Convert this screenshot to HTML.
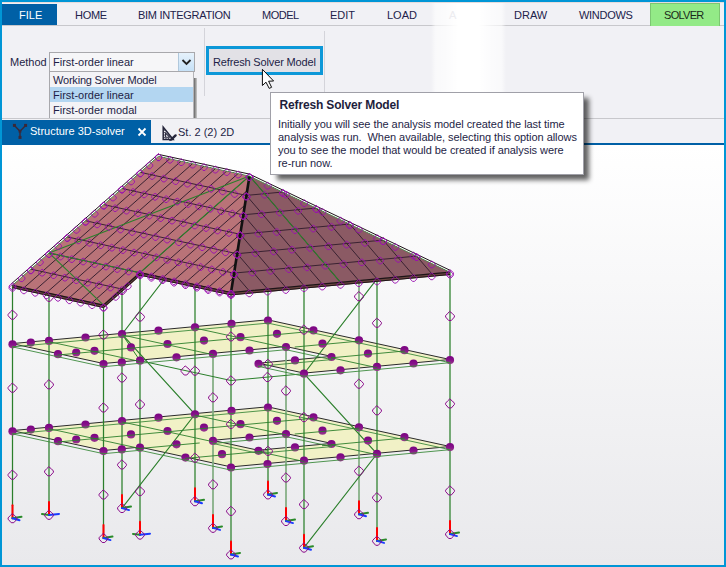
<!DOCTYPE html>
<html><head><meta charset="utf-8">
<style>
*{margin:0;padding:0;box-sizing:border-box}
html,body{width:726px;height:567px;overflow:hidden;background:#0096d6}
body{position:relative;font-family:"Liberation Sans",sans-serif;font-size:11px;color:#1e1e46}
.abs{position:absolute}
#win{position:absolute;left:2px;top:2px;width:722px;height:563px;background:#f1f1f5;overflow:hidden}
.tabtxt{position:absolute;top:7px;font-size:11px;line-height:12px;white-space:nowrap;color:#22224a}
.t{position:absolute;white-space:nowrap;line-height:12px}
</style></head><body>
<div id="win">
  <!-- top thin line -->
  <div class="abs" style="left:0;top:0;width:722px;height:1px;background:#e6dcdc"></div>
  <!-- ribbon tab row -->
  <div class="abs" style="left:0;top:2px;width:55px;height:22px;background:#0060a6"></div>
  <div class="abs" style="left:0;top:23px;width:722px;height:1px;background:#c8c8cc"></div>
  <div class="abs" style="left:648px;top:1px;width:70px;height:23px;background:#93ea87;border:1px solid #7cc672;border-bottom:none"></div>
  <div class="abs" style="left:429px;top:1px;width:75px;height:115px;background:linear-gradient(90deg,rgba(255,255,255,0) 0%,rgba(255,255,255,.6) 6%,rgba(255,255,255,.75) 20%,#fff 36%,#fff 64%,rgba(255,255,255,.75) 80%,rgba(255,255,255,.6) 94%,rgba(255,255,255,0) 100%)"></div>
  <div class="tabtxt" style="left:17px;color:#fff">FILE</div>
  <div class="tabtxt" style="left:73px;letter-spacing:-0.3px">HOME</div>
  <div class="tabtxt" style="left:136px;letter-spacing:-0.3px">BIM INTEGRATION</div>
  <div class="tabtxt" style="left:260px;letter-spacing:-0.5px">MODEL</div>
  <div class="tabtxt" style="left:328px">EDIT</div>
  <div class="tabtxt" style="left:385px">LOAD</div>
  <div class="tabtxt" style="left:447px;color:#ececf0">A</div>
  <div class="tabtxt" style="left:512px">DRAW</div>
  <div class="tabtxt" style="left:577px;letter-spacing:-0.3px">WINDOWS</div>
  <div class="tabtxt" style="left:662px;color:#1a2a1a;letter-spacing:-0.7px">SOLVER</div>

  <!-- ribbon separators -->
  <div class="abs" style="left:202px;top:26px;width:1px;height:68px;background:#d4d4da"></div>
  <div class="abs" style="left:322px;top:29px;width:1px;height:62px;background:#d4d4da"></div>
  <!-- ribbon bottom line -->
  <div class="abs" style="left:0;top:116px;width:722px;height:1px;background:#c8c8cc"></div>

  <!-- Method combo -->
  <div class="t" style="left:8px;top:54px">Method</div>
  <div class="abs" style="left:47px;top:50px;width:146px;height:20px;background:#f6f6f8;border:1px solid #a8a8ac"></div>
  <div class="abs" style="left:176px;top:51px;width:16px;height:18px;background:linear-gradient(#e6f2fc,#c6e1f7);border-left:1px solid #b0c8dc"></div>
  <svg class="abs" style="left:179px;top:55px" width="11" height="10"><path d="M1.5 3 L5.5 7 L9.5 3" fill="none" stroke="#222" stroke-width="1.8"/></svg>
  <div class="t" style="left:51px;top:54px">First-order linear</div>
  <!-- dropdown list -->
  <div class="abs" style="left:192px;top:76px;width:3px;height:40px;background:linear-gradient(90deg,#666,#ccc)"></div>
  <div class="abs" style="left:47px;top:70px;width:145px;height:46px;background:#f3f3f6;border-left:1px solid #a8a8ac;border-right:1px solid #b4b4b8"></div>
  <div class="abs" style="left:48px;top:85px;width:143px;height:15px;background:#b3d6f1"></div>
  <div class="t" style="left:51px;top:72px;letter-spacing:-0.2px">Working Solver Model</div>
  <div class="t" style="left:51px;top:87px">First-order linear</div>
  <div class="t" style="left:51px;top:102px">First-order modal</div>

  <!-- refresh button -->
  <div class="abs" style="left:204px;top:44px;width:117px;height:29px;border:3px solid #0d98d8;background:#e2e1e6"></div>
  <div class="t" style="left:211px;top:54px;letter-spacing:-0.15px">Refresh Solver Model</div>

  <!-- doc tab bar -->
  <div class="abs" style="left:0;top:117px;width:722px;height:26px;background:#f1f1f5"></div>
  <div class="abs" style="left:0;top:118px;width:149px;height:25px;background:#0060a6"></div>
  <div class="abs" style="left:0;top:141px;width:722px;height:2px;background:#0060a6"></div>
  <div class="t" style="left:28px;top:123px;color:#fff">Structure 3D-solver</div>
  <svg class="abs" style="left:135px;top:125px" width="10" height="10"><path d="M1.5 1.5 L8.5 8.5 M8.5 1.5 L1.5 8.5" stroke="#fff" stroke-width="1.8"/></svg>
  <svg class="abs" style="left:10px;top:121px" width="20" height="20"><path d="M2.4 2.4 L8 8.2 L13.6 2.4 M8 8.2 L8 14.4" stroke="#3a2838" stroke-width="1.4" fill="none"/><rect x="0.9" y="0.9" width="3" height="3" fill="#3a2838"/><rect x="12.1" y="0.9" width="3" height="3" fill="#3a2838"/><rect x="6.5" y="12.9" width="3" height="3" fill="#3a2838"/><rect x="6.6" y="6.8" width="2.8" height="2.8" fill="#3a2838"/></svg>
  <svg class="abs" style="left:158.5px;top:122.5px" width="22" height="22"><path d="M2.2 2.2 L2.2 14.6 L12.2 14.6 Z" fill="none" stroke="#25253a" stroke-width="1.5" stroke-linejoin="miter"/><path d="M4.6 8 L4.6 12.2 L8.8 12.2 Z" fill="none" stroke="#25253a" stroke-width="1.1"/><path d="M2.6 5.2 h1.3 M2.6 7.6 h1.3 M2.6 10 h1.3 M2.6 12.4 h1.3 M5 14.2 v-1.2 M7.4 14.2 v-1.2" stroke="#25253a" stroke-width="0.9"/><path d="M10.4 14.4 L14.6 10.4" stroke="#25253a" stroke-width="2.4" stroke-linecap="round"/><path d="M8.6 15.8 L10 14.4" stroke="#25253a" stroke-width="1.2"/></svg>
  <div class="t" style="left:176px;top:124px">St. 2 (2) 2D</div>

  <!-- viewport -->
  <div class="abs" style="left:0;top:143px;width:722px;height:420px;background:linear-gradient(#ffffff,#e9e9ec)"></div>
  <div class="abs" style="left:-2px;top:-2px;width:726px;height:567px;clip-path:inset(145px 2px 2px 2px)"><svg width="726" height="567" viewBox="0 0 726 567" style="position:absolute;left:0;top:0"><defs><linearGradient id="ng" x1="0" y1="0" x2="0" y2="1"><stop offset="0" stop-color="#7a0480"/><stop offset="0.5" stop-color="#86108a"/><stop offset="1" stop-color="#9a3a8e"/></linearGradient></defs><g stroke-linecap="round">
<path d="M12.5,430.7 L103.5,450.5 L140.0,447.1 L231.0,466.9 L450.0,446.5 L268.0,406.9 Z M213.0,440.3 L286.0,433.5 L331.5,443.4 L258.5,450.2 Z" fill="#f1f1c6" fill-rule="evenodd" stroke="#2a2a2a" stroke-width="1"/>
<path d="M12.5,343.7 L103.5,363.5 L286.0,346.5 L331.5,356.4 L258.5,363.2 L304.0,373.1 L450.0,359.5 L268.0,319.9 Z" fill="#f1f1c6" fill-rule="evenodd" stroke="#2a2a2a" stroke-width="1"/>
<line x1="12.5" y1="518.3" x2="12.5" y2="285.3" stroke="#2b7f2b" stroke-width="1.25" />
<line x1="49.0" y1="514.9" x2="49.0" y2="252.9" stroke="#2b7f2b" stroke-width="1.25" />
<line x1="122.0" y1="508.1" x2="122.0" y2="246.1" stroke="#2b7f2b" stroke-width="1.25" />
<line x1="195.0" y1="501.3" x2="195.0" y2="239.3" stroke="#2b7f2b" stroke-width="1.25" />
<line x1="268.0" y1="494.5" x2="268.0" y2="232.5" stroke="#2b7f2b" stroke-width="1.25" />
<line x1="103.5" y1="538.1" x2="103.5" y2="305.1" stroke="#2b7f2b" stroke-width="1.25" />
<line x1="140.0" y1="534.7" x2="140.0" y2="272.7" stroke="#2b7f2b" stroke-width="1.25" />
<line x1="213.0" y1="527.9" x2="213.0" y2="353.9" stroke="#80ac80" stroke-width="1.7" />
<line x1="286.0" y1="521.1" x2="286.0" y2="347.1" stroke="#80ac80" stroke-width="1.7" />
<line x1="359.0" y1="514.3" x2="359.0" y2="252.3" stroke="#80ac80" stroke-width="1.7" />
<line x1="231.0" y1="554.5" x2="231.0" y2="292.5" stroke="#2b7f2b" stroke-width="1.25" />
<line x1="304.0" y1="547.7" x2="304.0" y2="285.7" stroke="#2b7f2b" stroke-width="1.25" />
<line x1="377.0" y1="540.9" x2="377.0" y2="278.9" stroke="#2b7f2b" stroke-width="1.25" />
<line x1="450.0" y1="534.1" x2="450.0" y2="272.1" stroke="#2b7f2b" stroke-width="1.25" />
<polyline points="140.0,360.7 231.0,380.5 304.0,373.7" fill="none" stroke="#2b7f2b" stroke-width="1.0" />
<line x1="122.0" y1="334.1" x2="140.0" y2="360.7" stroke="#2b7f2b" stroke-width="1.0" />
<polyline points="122.0,508.1 195.0,414.3 122.0,334.1 195.0,239.3" fill="none" stroke="#2b7f2b" stroke-width="1.1" />
<polyline points="304.0,547.7 377.0,453.9 304.0,373.7 377.0,278.9" fill="none" stroke="#2b7f2b" stroke-width="1.1" />
<circle cx="12.5" cy="431.3" r="4.1" fill="url(#ng)"/>
<circle cx="30.8" cy="429.6" r="4.1" fill="url(#ng)"/>
<circle cx="49.0" cy="427.9" r="4.1" fill="url(#ng)"/>
<circle cx="85.5" cy="424.5" r="4.1" fill="url(#ng)"/>
<circle cx="122.0" cy="421.1" r="4.1" fill="url(#ng)"/>
<circle cx="158.5" cy="417.7" r="4.1" fill="url(#ng)"/>
<circle cx="195.0" cy="414.3" r="4.1" fill="url(#ng)"/>
<circle cx="231.5" cy="410.9" r="4.1" fill="url(#ng)"/>
<circle cx="268.0" cy="407.5" r="4.1" fill="url(#ng)"/>
<circle cx="58.0" cy="441.2" r="4.1" fill="url(#ng)"/>
<circle cx="76.2" cy="439.5" r="4.1" fill="url(#ng)"/>
<circle cx="94.5" cy="437.8" r="4.1" fill="url(#ng)"/>
<circle cx="131.0" cy="434.4" r="4.1" fill="url(#ng)"/>
<circle cx="167.5" cy="431.0" r="4.1" fill="url(#ng)"/>
<circle cx="204.0" cy="427.6" r="4.1" fill="url(#ng)"/>
<circle cx="240.5" cy="424.2" r="4.1" fill="url(#ng)"/>
<circle cx="277.0" cy="420.8" r="4.1" fill="url(#ng)"/>
<circle cx="313.5" cy="417.4" r="4.1" fill="url(#ng)"/>
<circle cx="103.5" cy="451.1" r="4.1" fill="url(#ng)"/>
<circle cx="121.8" cy="449.4" r="4.1" fill="url(#ng)"/>
<circle cx="140.0" cy="447.7" r="4.1" fill="url(#ng)"/>
<circle cx="176.5" cy="444.3" r="4.1" fill="url(#ng)"/>
<circle cx="213.0" cy="440.9" r="4.1" fill="url(#ng)"/>
<circle cx="249.5" cy="437.5" r="4.1" fill="url(#ng)"/>
<circle cx="286.0" cy="434.1" r="4.1" fill="url(#ng)"/>
<circle cx="322.5" cy="430.7" r="4.1" fill="url(#ng)"/>
<circle cx="359.0" cy="427.3" r="4.1" fill="url(#ng)"/>
<circle cx="185.5" cy="457.6" r="4.1" fill="url(#ng)"/>
<circle cx="222.0" cy="454.2" r="4.1" fill="url(#ng)"/>
<circle cx="258.5" cy="450.8" r="4.1" fill="url(#ng)"/>
<circle cx="295.0" cy="447.4" r="4.1" fill="url(#ng)"/>
<circle cx="331.5" cy="444.0" r="4.1" fill="url(#ng)"/>
<circle cx="368.0" cy="440.6" r="4.1" fill="url(#ng)"/>
<circle cx="404.5" cy="437.2" r="4.1" fill="url(#ng)"/>
<circle cx="231.0" cy="467.5" r="4.1" fill="url(#ng)"/>
<circle cx="267.5" cy="464.1" r="4.1" fill="url(#ng)"/>
<circle cx="304.0" cy="460.7" r="4.1" fill="url(#ng)"/>
<circle cx="340.5" cy="457.3" r="4.1" fill="url(#ng)"/>
<circle cx="377.0" cy="453.9" r="4.1" fill="url(#ng)"/>
<circle cx="413.5" cy="450.5" r="4.1" fill="url(#ng)"/>
<circle cx="450.0" cy="447.1" r="4.1" fill="url(#ng)"/>
<circle cx="12.5" cy="344.3" r="4.1" fill="url(#ng)"/>
<circle cx="30.8" cy="342.6" r="4.1" fill="url(#ng)"/>
<circle cx="49.0" cy="340.9" r="4.1" fill="url(#ng)"/>
<circle cx="85.5" cy="337.5" r="4.1" fill="url(#ng)"/>
<circle cx="122.0" cy="334.1" r="4.1" fill="url(#ng)"/>
<circle cx="158.5" cy="330.7" r="4.1" fill="url(#ng)"/>
<circle cx="195.0" cy="327.3" r="4.1" fill="url(#ng)"/>
<circle cx="231.5" cy="323.9" r="4.1" fill="url(#ng)"/>
<circle cx="268.0" cy="320.5" r="4.1" fill="url(#ng)"/>
<circle cx="58.0" cy="354.2" r="4.1" fill="url(#ng)"/>
<circle cx="76.2" cy="352.5" r="4.1" fill="url(#ng)"/>
<circle cx="94.5" cy="350.8" r="4.1" fill="url(#ng)"/>
<circle cx="131.0" cy="347.4" r="4.1" fill="url(#ng)"/>
<circle cx="167.5" cy="344.0" r="4.1" fill="url(#ng)"/>
<circle cx="204.0" cy="340.6" r="4.1" fill="url(#ng)"/>
<circle cx="240.5" cy="337.2" r="4.1" fill="url(#ng)"/>
<circle cx="277.0" cy="333.8" r="4.1" fill="url(#ng)"/>
<circle cx="313.5" cy="330.4" r="4.1" fill="url(#ng)"/>
<circle cx="103.5" cy="364.1" r="4.1" fill="url(#ng)"/>
<circle cx="121.8" cy="362.4" r="4.1" fill="url(#ng)"/>
<circle cx="140.0" cy="360.7" r="4.1" fill="url(#ng)"/>
<circle cx="176.5" cy="357.3" r="4.1" fill="url(#ng)"/>
<circle cx="213.0" cy="353.9" r="4.1" fill="url(#ng)"/>
<circle cx="249.5" cy="350.5" r="4.1" fill="url(#ng)"/>
<circle cx="286.0" cy="347.1" r="4.1" fill="url(#ng)"/>
<circle cx="322.5" cy="343.7" r="4.1" fill="url(#ng)"/>
<circle cx="359.0" cy="340.3" r="4.1" fill="url(#ng)"/>
<circle cx="258.5" cy="363.8" r="4.1" fill="url(#ng)"/>
<circle cx="295.0" cy="360.4" r="4.1" fill="url(#ng)"/>
<circle cx="331.5" cy="357.0" r="4.1" fill="url(#ng)"/>
<circle cx="368.0" cy="353.6" r="4.1" fill="url(#ng)"/>
<circle cx="404.5" cy="350.2" r="4.1" fill="url(#ng)"/>
<circle cx="304.0" cy="373.7" r="4.1" fill="url(#ng)"/>
<circle cx="340.5" cy="370.3" r="4.1" fill="url(#ng)"/>
<circle cx="377.0" cy="366.9" r="4.1" fill="url(#ng)"/>
<circle cx="413.5" cy="363.5" r="4.1" fill="url(#ng)"/>
<circle cx="450.0" cy="360.1" r="4.1" fill="url(#ng)"/>
<path d="M12.5,433.9 L103.5,453.7 M103.5,453.7 L140.0,450.3 M140.0,450.3 L231.0,470.1 M231.0,470.1 L450.0,449.7 M450.0,449.7 L268.0,410.1 M268.0,410.1 L12.5,433.9 M213.0,443.5 L286.0,436.7 M286.0,436.7 L331.5,446.6 M331.5,446.6 L258.5,453.4 M258.5,453.4 L213.0,443.5" fill="none" stroke="#3c8a3c" stroke-width="0.9"/>
<line x1="58.0" y1="442.0" x2="313.5" y2="418.2" stroke="#2b7f2b" stroke-width="0.9" />
<line x1="135.4" y1="448.9" x2="199.3" y2="443.0" stroke="#2b7f2b" stroke-width="0.9" />
<line x1="295.1" y1="434.0" x2="359.0" y2="428.1" stroke="#2b7f2b" stroke-width="0.9" />
<line x1="185.5" y1="458.4" x2="267.6" y2="450.8" stroke="#2b7f2b" stroke-width="0.9" />
<line x1="322.4" y1="445.7" x2="404.5" y2="438.0" stroke="#2b7f2b" stroke-width="0.9" />
<line x1="49.0" y1="428.7" x2="140.0" y2="448.5" stroke="#2b7f2b" stroke-width="0.9" />
<line x1="122.0" y1="421.9" x2="213.0" y2="441.7" stroke="#2b7f2b" stroke-width="0.9" />
<line x1="258.5" y1="451.6" x2="304.0" y2="461.5" stroke="#2b7f2b" stroke-width="0.9" />
<line x1="195.0" y1="415.1" x2="286.0" y2="434.9" stroke="#2b7f2b" stroke-width="0.9" />
<line x1="331.5" y1="444.8" x2="377.0" y2="454.7" stroke="#2b7f2b" stroke-width="0.9" />
<path d="M12.5,346.9 L103.5,366.7 M103.5,366.7 L286.0,349.7 M286.0,349.7 L331.5,359.6 M331.5,359.6 L258.5,366.4 M258.5,366.4 L304.0,376.3 M304.0,376.3 L450.0,362.7 M450.0,362.7 L268.0,323.1 M268.0,323.1 L12.5,346.9" fill="none" stroke="#3c8a3c" stroke-width="0.9"/>
<line x1="58.0" y1="355.0" x2="313.5" y2="331.2" stroke="#2b7f2b" stroke-width="0.9" />
<line x1="295.1" y1="347.0" x2="359.0" y2="341.1" stroke="#2b7f2b" stroke-width="0.9" />
<line x1="331.5" y1="357.8" x2="404.5" y2="351.0" stroke="#2b7f2b" stroke-width="0.9" />
<line x1="49.0" y1="341.7" x2="140.0" y2="361.5" stroke="#2b7f2b" stroke-width="0.9" />
<line x1="122.0" y1="334.9" x2="213.0" y2="354.7" stroke="#2b7f2b" stroke-width="0.9" />
<line x1="195.0" y1="328.1" x2="286.0" y2="347.9" stroke="#2b7f2b" stroke-width="0.9" />
<line x1="331.5" y1="357.8" x2="377.0" y2="367.7" stroke="#2b7f2b" stroke-width="0.9" />
<polygon points="12.5,470.4 14.9,472.2 16.9,474.4 16.9,475.7 13.8,479.2 11.2,479.2 8.1,475.7 8.1,474.4 10.1,472.2" fill="none" stroke="#8a0a8a" stroke-width="1"/>
<polygon points="12.5,383.4 14.9,385.2 16.9,387.4 16.9,388.7 13.8,392.2 11.2,392.2 8.1,388.7 8.1,387.4 10.1,385.2" fill="none" stroke="#8a0a8a" stroke-width="1"/>
<polygon points="12.5,310.4 14.9,312.2 16.9,314.4 16.9,315.7 13.8,319.2 11.2,319.2 8.1,315.7 8.1,314.4 10.1,312.2" fill="none" stroke="#8a0a8a" stroke-width="1"/>
<polygon points="49.0,467.0 51.4,468.8 53.4,471.0 53.4,472.3 50.3,475.8 47.7,475.8 44.6,472.3 44.6,471.0 46.6,468.8" fill="none" stroke="#8a0a8a" stroke-width="1"/>
<polygon points="49.0,380.0 51.4,381.8 53.4,384.0 53.4,385.3 50.3,388.8 47.7,388.8 44.6,385.3 44.6,384.0 46.6,381.8" fill="none" stroke="#8a0a8a" stroke-width="1"/>
<polygon points="49.0,292.5 51.4,294.3 53.4,296.5 53.4,297.8 50.3,301.3 47.7,301.3 44.6,297.8 44.6,296.5 46.6,294.3" fill="none" stroke="#8a0a8a" stroke-width="1"/>
<polygon points="122.0,460.2 124.4,462.0 126.4,464.2 126.4,465.5 123.3,469.0 120.7,469.0 117.6,465.5 117.6,464.2 119.6,462.0" fill="none" stroke="#8a0a8a" stroke-width="1"/>
<polygon points="122.0,373.2 124.4,375.0 126.4,377.2 126.4,378.5 123.3,382.0 120.7,382.0 117.6,378.5 117.6,377.2 119.6,375.0" fill="none" stroke="#8a0a8a" stroke-width="1"/>
<polygon points="122.0,285.7 124.4,287.5 126.4,289.7 126.4,291.0 123.3,294.5 120.7,294.5 117.6,291.0 117.6,289.7 119.6,287.5" fill="none" stroke="#8a0a8a" stroke-width="1"/>
<polygon points="195.0,453.4 197.4,455.2 199.4,457.4 199.4,458.7 196.3,462.2 193.7,462.2 190.6,458.7 190.6,457.4 192.6,455.2" fill="none" stroke="#8a0a8a" stroke-width="1"/>
<polygon points="195.0,366.4 197.4,368.2 199.4,370.4 199.4,371.7 196.3,375.2 193.7,375.2 190.6,371.7 190.6,370.4 192.6,368.2" fill="none" stroke="#8a0a8a" stroke-width="1"/>
<polygon points="195.0,278.9 197.4,280.7 199.4,282.9 199.4,284.2 196.3,287.7 193.7,287.7 190.6,284.2 190.6,282.9 192.6,280.7" fill="none" stroke="#8a0a8a" stroke-width="1"/>
<polygon points="268.0,446.6 270.4,448.4 272.4,450.6 272.4,451.9 269.3,455.4 266.7,455.4 263.6,451.9 263.6,450.6 265.6,448.4" fill="none" stroke="#8a0a8a" stroke-width="1"/>
<polygon points="268.0,359.6 270.4,361.4 272.4,363.6 272.4,364.9 269.3,368.4 266.7,368.4 263.6,364.9 263.6,363.6 265.6,361.4" fill="none" stroke="#8a0a8a" stroke-width="1"/>
<polygon points="268.0,272.1 270.4,273.9 272.4,276.1 272.4,277.4 269.3,280.9 266.7,280.9 263.6,277.4 263.6,276.1 265.6,273.9" fill="none" stroke="#8a0a8a" stroke-width="1"/>
<polygon points="103.5,490.2 105.9,492.0 107.9,494.2 107.9,495.5 104.8,499.0 102.2,499.0 99.1,495.5 99.1,494.2 101.1,492.0" fill="none" stroke="#8a0a8a" stroke-width="1"/>
<polygon points="103.5,403.2 105.9,405.0 107.9,407.2 107.9,408.5 104.8,412.0 102.2,412.0 99.1,408.5 99.1,407.2 101.1,405.0" fill="none" stroke="#8a0a8a" stroke-width="1"/>
<polygon points="103.5,330.2 105.9,332.0 107.9,334.2 107.9,335.5 104.8,339.0 102.2,339.0 99.1,335.5 99.1,334.2 101.1,332.0" fill="none" stroke="#8a0a8a" stroke-width="1"/>
<polygon points="140.0,486.8 142.4,488.6 144.4,490.8 144.4,492.1 141.3,495.6 138.7,495.6 135.6,492.1 135.6,490.8 137.6,488.6" fill="none" stroke="#8a0a8a" stroke-width="1"/>
<polygon points="140.0,399.8 142.4,401.6 144.4,403.8 144.4,405.1 141.3,408.6 138.7,408.6 135.6,405.1 135.6,403.8 137.6,401.6" fill="none" stroke="#8a0a8a" stroke-width="1"/>
<polygon points="140.0,312.3 142.4,314.1 144.4,316.3 144.4,317.6 141.3,321.1 138.7,321.1 135.6,317.6 135.6,316.3 137.6,314.1" fill="none" stroke="#8a0a8a" stroke-width="1"/>
<polygon points="213.0,480.0 215.4,481.8 217.4,484.0 217.4,485.3 214.3,488.8 211.7,488.8 208.6,485.3 208.6,484.0 210.6,481.8" fill="none" stroke="#8a0a8a" stroke-width="1"/>
<polygon points="213.0,393.0 215.4,394.8 217.4,397.0 217.4,398.3 214.3,401.8 211.7,401.8 208.6,398.3 208.6,397.0 210.6,394.8" fill="none" stroke="#8a0a8a" stroke-width="1"/>
<polygon points="286.0,473.2 288.4,475.0 290.4,477.2 290.4,478.5 287.3,482.0 284.7,482.0 281.6,478.5 281.6,477.2 283.6,475.0" fill="none" stroke="#8a0a8a" stroke-width="1"/>
<polygon points="286.0,386.2 288.4,388.0 290.4,390.2 290.4,391.5 287.3,395.0 284.7,395.0 281.6,391.5 281.6,390.2 283.6,388.0" fill="none" stroke="#8a0a8a" stroke-width="1"/>
<polygon points="359.0,466.4 361.4,468.2 363.4,470.4 363.4,471.7 360.3,475.2 357.7,475.2 354.6,471.7 354.6,470.4 356.6,468.2" fill="none" stroke="#8a0a8a" stroke-width="1"/>
<polygon points="359.0,379.4 361.4,381.2 363.4,383.4 363.4,384.7 360.3,388.2 357.7,388.2 354.6,384.7 354.6,383.4 356.6,381.2" fill="none" stroke="#8a0a8a" stroke-width="1"/>
<polygon points="359.0,291.9 361.4,293.7 363.4,295.9 363.4,297.2 360.3,300.7 357.7,300.7 354.6,297.2 354.6,295.9 356.6,293.7" fill="none" stroke="#8a0a8a" stroke-width="1"/>
<polygon points="231.0,506.6 233.4,508.4 235.4,510.6 235.4,511.9 232.3,515.4 229.7,515.4 226.6,511.9 226.6,510.6 228.6,508.4" fill="none" stroke="#8a0a8a" stroke-width="1"/>
<polygon points="231.0,419.6 233.4,421.4 235.4,423.6 235.4,424.9 232.3,428.4 229.7,428.4 226.6,424.9 226.6,423.6 228.6,421.4" fill="none" stroke="#8a0a8a" stroke-width="1"/>
<polygon points="231.0,332.1 233.4,333.9 235.4,336.1 235.4,337.4 232.3,340.9 229.7,340.9 226.6,337.4 226.6,336.1 228.6,333.9" fill="none" stroke="#8a0a8a" stroke-width="1"/>
<polygon points="304.0,499.8 306.4,501.6 308.4,503.8 308.4,505.1 305.3,508.6 302.7,508.6 299.6,505.1 299.6,503.8 301.6,501.6" fill="none" stroke="#8a0a8a" stroke-width="1"/>
<polygon points="304.0,412.8 306.4,414.6 308.4,416.8 308.4,418.1 305.3,421.6 302.7,421.6 299.6,418.1 299.6,416.8 301.6,414.6" fill="none" stroke="#8a0a8a" stroke-width="1"/>
<polygon points="304.0,325.3 306.4,327.1 308.4,329.3 308.4,330.6 305.3,334.1 302.7,334.1 299.6,330.6 299.6,329.3 301.6,327.1" fill="none" stroke="#8a0a8a" stroke-width="1"/>
<polygon points="377.0,493.0 379.4,494.8 381.4,497.0 381.4,498.3 378.3,501.8 375.7,501.8 372.6,498.3 372.6,497.0 374.6,494.8" fill="none" stroke="#8a0a8a" stroke-width="1"/>
<polygon points="377.0,406.0 379.4,407.8 381.4,410.0 381.4,411.3 378.3,414.8 375.7,414.8 372.6,411.3 372.6,410.0 374.6,407.8" fill="none" stroke="#8a0a8a" stroke-width="1"/>
<polygon points="377.0,318.5 379.4,320.3 381.4,322.5 381.4,323.8 378.3,327.3 375.7,327.3 372.6,323.8 372.6,322.5 374.6,320.3" fill="none" stroke="#8a0a8a" stroke-width="1"/>
<polygon points="450.0,486.2 452.4,488.0 454.4,490.2 454.4,491.5 451.3,495.0 448.7,495.0 445.6,491.5 445.6,490.2 447.6,488.0" fill="none" stroke="#8a0a8a" stroke-width="1"/>
<polygon points="450.0,399.2 452.4,401.0 454.4,403.2 454.4,404.5 451.3,408.0 448.7,408.0 445.6,404.5 445.6,403.2 447.6,401.0" fill="none" stroke="#8a0a8a" stroke-width="1"/>
<polygon points="450.0,311.7 452.4,313.5 454.4,315.7 454.4,317.0 451.3,320.5 448.7,320.5 445.6,317.0 445.6,315.7 447.6,313.5" fill="none" stroke="#8a0a8a" stroke-width="1"/>
<polygon points="185.5,366.2 187.9,368.0 189.9,370.2 189.9,371.5 186.8,375.0 184.2,375.0 181.1,371.5 181.1,370.2 183.1,368.0" fill="none" stroke="#8a0a8a" stroke-width="1"/>
<polygon points="231.0,376.1 233.4,377.9 235.4,380.1 235.4,381.4 232.3,384.9 229.7,384.9 226.6,381.4 226.6,380.1 228.6,377.9" fill="none" stroke="#8a0a8a" stroke-width="1"/>
<polygon points="267.5,372.7 269.9,374.5 271.9,376.7 271.9,378.0 268.8,381.5 266.2,381.5 263.1,378.0 263.1,376.7 265.1,374.5" fill="none" stroke="#8a0a8a" stroke-width="1"/>
<line x1="12.5" y1="518.3" x2="12.5" y2="505.3" stroke="#f00" stroke-width="2"/>
<line x1="12.5" y1="518.3" x2="21.5" y2="516.8" stroke="#2a8a2a" stroke-width="2"/>
<line x1="12.5" y1="518.3" x2="19.5" y2="520.3" stroke="#1a3aff" stroke-width="2"/>
<polygon points="12.5,513.9 14.9,515.7 16.9,517.9 16.9,519.2 13.8,522.7 11.2,522.7 8.1,519.2 8.1,517.9 10.1,515.7" fill="none" stroke="#8a0a8a" stroke-width="1"/>
<line x1="49.0" y1="514.9" x2="49.0" y2="501.9" stroke="#f00" stroke-width="2"/>
<line x1="49.0" y1="514.9" x2="42.0" y2="514.1" stroke="#2a8a2a" stroke-width="2"/>
<line x1="49.0" y1="514.9" x2="59.0" y2="513.9" stroke="#1a3aff" stroke-width="2"/>
<polygon points="49.0,510.5 51.4,512.3 53.4,514.5 53.4,515.8 50.3,519.3 47.7,519.3 44.6,515.8 44.6,514.5 46.6,512.3" fill="none" stroke="#8a0a8a" stroke-width="1"/>
<line x1="122.0" y1="508.1" x2="122.0" y2="495.1" stroke="#f00" stroke-width="2"/>
<line x1="122.0" y1="508.1" x2="131.0" y2="506.6" stroke="#2a8a2a" stroke-width="2"/>
<line x1="122.0" y1="508.1" x2="129.0" y2="510.1" stroke="#1a3aff" stroke-width="2"/>
<polygon points="122.0,503.7 124.4,505.5 126.4,507.7 126.4,509.0 123.3,512.5 120.7,512.5 117.6,509.0 117.6,507.7 119.6,505.5" fill="none" stroke="#8a0a8a" stroke-width="1"/>
<line x1="195.0" y1="501.3" x2="195.0" y2="488.3" stroke="#f00" stroke-width="2"/>
<line x1="195.0" y1="501.3" x2="204.0" y2="499.8" stroke="#2a8a2a" stroke-width="2"/>
<line x1="195.0" y1="501.3" x2="202.0" y2="503.3" stroke="#1a3aff" stroke-width="2"/>
<polygon points="195.0,496.9 197.4,498.7 199.4,500.9 199.4,502.2 196.3,505.7 193.7,505.7 190.6,502.2 190.6,500.9 192.6,498.7" fill="none" stroke="#8a0a8a" stroke-width="1"/>
<line x1="268.0" y1="494.5" x2="268.0" y2="481.5" stroke="#f00" stroke-width="2"/>
<line x1="268.0" y1="494.5" x2="277.0" y2="493.0" stroke="#2a8a2a" stroke-width="2"/>
<line x1="268.0" y1="494.5" x2="275.0" y2="496.5" stroke="#1a3aff" stroke-width="2"/>
<polygon points="268.0,490.1 270.4,491.9 272.4,494.1 272.4,495.4 269.3,498.9 266.7,498.9 263.6,495.4 263.6,494.1 265.6,491.9" fill="none" stroke="#8a0a8a" stroke-width="1"/>
<line x1="103.5" y1="538.1" x2="103.5" y2="525.1" stroke="#f00" stroke-width="2"/>
<line x1="103.5" y1="538.1" x2="112.5" y2="536.6" stroke="#2a8a2a" stroke-width="2"/>
<line x1="103.5" y1="538.1" x2="110.5" y2="540.1" stroke="#1a3aff" stroke-width="2"/>
<polygon points="103.5,533.7 105.9,535.5 107.9,537.7 107.9,539.0 104.8,542.5 102.2,542.5 99.1,539.0 99.1,537.7 101.1,535.5" fill="none" stroke="#8a0a8a" stroke-width="1"/>
<line x1="140.0" y1="534.7" x2="140.0" y2="521.7" stroke="#f00" stroke-width="2"/>
<line x1="140.0" y1="534.7" x2="133.0" y2="533.9" stroke="#2a8a2a" stroke-width="2"/>
<line x1="140.0" y1="534.7" x2="150.0" y2="533.7" stroke="#1a3aff" stroke-width="2"/>
<polygon points="140.0,530.3 142.4,532.1 144.4,534.3 144.4,535.6 141.3,539.1 138.7,539.1 135.6,535.6 135.6,534.3 137.6,532.1" fill="none" stroke="#8a0a8a" stroke-width="1"/>
<line x1="213.0" y1="527.9" x2="213.0" y2="514.9" stroke="#f00" stroke-width="2"/>
<line x1="213.0" y1="527.9" x2="222.0" y2="526.4" stroke="#2a8a2a" stroke-width="2"/>
<line x1="213.0" y1="527.9" x2="220.0" y2="529.9" stroke="#1a3aff" stroke-width="2"/>
<polygon points="213.0,523.5 215.4,525.3 217.4,527.5 217.4,528.8 214.3,532.3 211.7,532.3 208.6,528.8 208.6,527.5 210.6,525.3" fill="none" stroke="#8a0a8a" stroke-width="1"/>
<line x1="286.0" y1="521.1" x2="286.0" y2="508.1" stroke="#f00" stroke-width="2"/>
<line x1="286.0" y1="521.1" x2="295.0" y2="519.6" stroke="#2a8a2a" stroke-width="2"/>
<line x1="286.0" y1="521.1" x2="293.0" y2="523.1" stroke="#1a3aff" stroke-width="2"/>
<polygon points="286.0,516.7 288.4,518.5 290.4,520.7 290.4,522.0 287.3,525.5 284.7,525.5 281.6,522.0 281.6,520.7 283.6,518.5" fill="none" stroke="#8a0a8a" stroke-width="1"/>
<line x1="359.0" y1="514.3" x2="359.0" y2="501.3" stroke="#f00" stroke-width="2"/>
<line x1="359.0" y1="514.3" x2="368.0" y2="512.8" stroke="#2a8a2a" stroke-width="2"/>
<line x1="359.0" y1="514.3" x2="366.0" y2="516.3" stroke="#1a3aff" stroke-width="2"/>
<polygon points="359.0,509.9 361.4,511.7 363.4,513.9 363.4,515.2 360.3,518.7 357.7,518.7 354.6,515.2 354.6,513.9 356.6,511.7" fill="none" stroke="#8a0a8a" stroke-width="1"/>
<line x1="231.0" y1="554.5" x2="231.0" y2="541.5" stroke="#f00" stroke-width="2"/>
<line x1="231.0" y1="554.5" x2="240.0" y2="553.0" stroke="#2a8a2a" stroke-width="2"/>
<line x1="231.0" y1="554.5" x2="238.0" y2="556.5" stroke="#1a3aff" stroke-width="2"/>
<polygon points="231.0,550.1 233.4,551.9 235.4,554.1 235.4,555.4 232.3,558.9 229.7,558.9 226.6,555.4 226.6,554.1 228.6,551.9" fill="none" stroke="#8a0a8a" stroke-width="1"/>
<line x1="304.0" y1="547.7" x2="304.0" y2="534.7" stroke="#f00" stroke-width="2"/>
<line x1="304.0" y1="547.7" x2="313.0" y2="546.2" stroke="#2a8a2a" stroke-width="2"/>
<line x1="304.0" y1="547.7" x2="311.0" y2="549.7" stroke="#1a3aff" stroke-width="2"/>
<polygon points="304.0,543.3 306.4,545.1 308.4,547.3 308.4,548.6 305.3,552.1 302.7,552.1 299.6,548.6 299.6,547.3 301.6,545.1" fill="none" stroke="#8a0a8a" stroke-width="1"/>
<line x1="377.0" y1="540.9" x2="377.0" y2="527.9" stroke="#f00" stroke-width="2"/>
<line x1="377.0" y1="540.9" x2="386.0" y2="539.4" stroke="#2a8a2a" stroke-width="2"/>
<line x1="377.0" y1="540.9" x2="384.0" y2="542.9" stroke="#1a3aff" stroke-width="2"/>
<polygon points="377.0,536.5 379.4,538.3 381.4,540.5 381.4,541.8 378.3,545.3 375.7,545.3 372.6,541.8 372.6,540.5 374.6,538.3" fill="none" stroke="#8a0a8a" stroke-width="1"/>
<line x1="450.0" y1="534.1" x2="450.0" y2="521.1" stroke="#f00" stroke-width="2"/>
<line x1="450.0" y1="534.1" x2="459.0" y2="532.6" stroke="#2a8a2a" stroke-width="2"/>
<line x1="450.0" y1="534.1" x2="457.0" y2="536.1" stroke="#1a3aff" stroke-width="2"/>
<polygon points="450.0,529.7 452.4,531.5 454.4,533.7 454.4,535.0 451.3,538.5 448.7,538.5 445.6,535.0 445.6,533.7 447.6,531.5" fill="none" stroke="#8a0a8a" stroke-width="1"/>
</g>
<g stroke-linejoin="round">
<polygon points="12.5,285.3 103.5,305.1 140.0,272.7 231.0,292.5 249.5,176.0 158.5,156.2" fill="#b97378" stroke="none" stroke-width="1" />
<polygon points="231.0,292.5 450.0,272.1 249.5,176.0" fill="#8b5a64" stroke="none" stroke-width="1" />
<line x1="23.9" y1="287.8" x2="169.9" y2="158.7" stroke="#3a2232" stroke-width="1.0" />
<line x1="35.2" y1="290.2" x2="181.2" y2="161.1" stroke="#3a2232" stroke-width="1.0" />
<line x1="46.6" y1="292.7" x2="192.6" y2="163.6" stroke="#3a2232" stroke-width="1.0" />
<line x1="58.0" y1="295.2" x2="204.0" y2="166.1" stroke="#3a2232" stroke-width="1.0" />
<line x1="69.4" y1="297.7" x2="215.4" y2="168.6" stroke="#3a2232" stroke-width="1.0" />
<line x1="80.8" y1="300.1" x2="226.8" y2="171.0" stroke="#3a2232" stroke-width="1.0" />
<line x1="92.1" y1="302.6" x2="238.1" y2="173.5" stroke="#3a2232" stroke-width="1.0" />
<line x1="103.5" y1="305.1" x2="140.0" y2="272.8" stroke="#3a2232" stroke-width="1.0" />
<line x1="140.0" y1="272.8" x2="249.5" y2="176.0" stroke="#3a2232" stroke-width="1.0" />
<line x1="151.4" y1="275.3" x2="247.2" y2="190.6" stroke="#3a2232" stroke-width="1.0" />
<line x1="162.8" y1="277.8" x2="244.9" y2="205.2" stroke="#3a2232" stroke-width="1.0" />
<line x1="174.1" y1="280.2" x2="242.6" y2="219.7" stroke="#3a2232" stroke-width="1.0" />
<line x1="185.5" y1="282.7" x2="240.2" y2="234.3" stroke="#3a2232" stroke-width="1.0" />
<line x1="196.9" y1="285.2" x2="237.9" y2="248.9" stroke="#3a2232" stroke-width="1.0" />
<line x1="208.2" y1="287.7" x2="235.6" y2="263.5" stroke="#3a2232" stroke-width="1.0" />
<line x1="219.6" y1="290.1" x2="233.3" y2="278.0" stroke="#3a2232" stroke-width="1.0" />
<polyline points="30.8,269.2 42.1,271.6 53.5,274.1 64.9,276.6 76.2,279.1 87.6,281.5 99.0,284.0 110.4,286.5 121.8,289.0" fill="none" stroke="#3a2232" stroke-width="1.0" />
<polyline points="140.0,272.8 151.4,275.3 162.8,277.8 174.1,280.2 185.5,282.7 196.9,285.2 208.2,287.7 219.6,290.1 231.0,292.6" fill="none" stroke="#3a2232" stroke-width="1.0" />
<polyline points="49.0,253.0 60.4,255.5 71.8,258.0 83.1,260.4 94.5,262.9 105.9,265.4 117.2,267.9 128.6,270.4 140.0,272.8" fill="none" stroke="#3a2232" stroke-width="1.0" />
<polyline points="67.2,236.9 78.4,239.3 89.5,241.7 100.6,244.1 111.7,246.6 122.9,249.0 134.0,251.4 145.1,253.8 156.2,256.2 167.4,258.7 178.5,261.1 189.6,263.5 200.7,265.9 211.8,268.3 223.0,270.8 234.1,273.2" fill="none" stroke="#3a2232" stroke-width="1.0" />
<polyline points="85.5,220.7 97.2,223.3 108.8,225.8 120.5,228.4 132.2,230.9 143.8,233.4 155.5,236.0 167.2,238.5 178.8,241.1 190.5,243.6 202.2,246.1 213.8,248.7 225.5,251.2 237.2,253.8" fill="none" stroke="#3a2232" stroke-width="1.0" />
<polyline points="103.8,204.6 115.1,207.1 126.5,209.6 137.9,212.0 149.2,214.5 160.6,217.0 172.0,219.5 183.4,221.9 194.8,224.4 206.1,226.9 217.5,229.4 228.9,231.8 240.2,234.3" fill="none" stroke="#3a2232" stroke-width="1.0" />
<polyline points="122.0,188.5 133.0,190.9 144.1,193.3 155.1,195.7 166.1,198.1 177.2,200.5 188.2,202.9 199.2,205.3 210.2,207.7 221.3,210.1 232.3,212.5 243.3,214.9" fill="none" stroke="#3a2232" stroke-width="1.0" />
<polyline points="140.2,172.3 152.0,174.9 163.8,177.5 175.6,180.0 187.4,182.6 199.2,185.2 211.0,187.7 222.8,190.3 234.6,192.9 246.4,195.4" fill="none" stroke="#3a2232" stroke-width="1.0" />
<line x1="249.2" y1="290.8" x2="234.1" y2="273.1" stroke="#3a2232" stroke-width="1" />
<line x1="267.5" y1="289.1" x2="237.2" y2="253.7" stroke="#3a2232" stroke-width="1" />
<line x1="285.8" y1="287.4" x2="240.2" y2="234.2" stroke="#3a2232" stroke-width="1" />
<line x1="304.0" y1="285.7" x2="243.3" y2="214.8" stroke="#3a2232" stroke-width="1" />
<line x1="322.2" y1="284.0" x2="246.4" y2="195.4" stroke="#3a2232" stroke-width="1" />
<line x1="340.5" y1="282.3" x2="249.5" y2="176.0" stroke="#3a2232" stroke-width="1" />
<line x1="358.8" y1="280.6" x2="282.9" y2="192.0" stroke="#3a2232" stroke-width="1" />
<line x1="377.0" y1="278.9" x2="316.3" y2="208.0" stroke="#3a2232" stroke-width="1" />
<line x1="395.2" y1="277.2" x2="349.8" y2="224.0" stroke="#3a2232" stroke-width="1" />
<line x1="413.5" y1="275.5" x2="383.2" y2="240.1" stroke="#3a2232" stroke-width="1" />
<line x1="431.8" y1="273.8" x2="416.6" y2="256.1" stroke="#3a2232" stroke-width="1" />
<polyline points="234.1,273.1 416.6,256.1" fill="none" stroke="#3a2232" stroke-width="1.0" />
<polyline points="237.2,253.7 383.2,240.1" fill="none" stroke="#3a2232" stroke-width="1.0" />
<polyline points="240.2,234.2 349.8,224.0" fill="none" stroke="#3a2232" stroke-width="1.0" />
<polyline points="243.3,214.8 316.3,208.0" fill="none" stroke="#3a2232" stroke-width="1.0" />
<polyline points="246.4,195.4 282.9,192.0" fill="none" stroke="#3a2232" stroke-width="1.0" />
<line x1="49.0" y1="252.9" x2="249.5" y2="176.0" stroke="#2b7f2b" stroke-width="1.1" />
<line x1="49.0" y1="252.9" x2="103.5" y2="305.1" stroke="#2b7f2b" stroke-width="1.1" />
<line x1="49.0" y1="252.9" x2="140.0" y2="272.7" stroke="#2b7f2b" stroke-width="1.1" />
<line x1="140.0" y1="272.7" x2="249.5" y2="176.0" stroke="#2b7f2b" stroke-width="1.1" />
<line x1="249.5" y1="176.0" x2="340.5" y2="282.3" stroke="#2b7f2b" stroke-width="1.1" />
<polyline points="12.5,286.5 103.5,306.3 140.0,273.9 231.0,293.7 450.0,273.3" fill="none" stroke="#6a4640" stroke-width="3.2" />
<polyline points="12.5,285.3 103.5,305.1 140.0,272.7 231.0,292.5 450.0,272.1" fill="none" stroke="#1e1418" stroke-width="1.2" />
<polyline points="12.5,287.7 103.5,307.5 140.0,275.1 231.0,294.9 450.0,274.5" fill="none" stroke="#1e1418" stroke-width="1.0" />
<line x1="249.5" y1="176.0" x2="231.0" y2="292.5" stroke="#111" stroke-width="2.6" />
<polyline points="12.5,285.3 158.5,156.2 249.5,176.0 450.0,272.1" fill="none" stroke="#4a8a4a" stroke-width="1.0" />
<polyline points="11.9,284.6 158.3,155.2 249.5,175.0 450.3,271.3" fill="none" stroke="#ffffff" stroke-width="0.9" />
<polyline points="11.3,283.9 158.1,154.3 249.5,174.1 450.5,270.5" fill="none" stroke="#1e1418" stroke-width="1.0" />
<polygon points="30.8,266.8 32.6,268.1 34.1,269.8 34.1,271.0 31.8,273.6 29.7,273.6 27.4,271.0 27.4,269.8 28.9,268.1" fill="none" stroke="#9a10b0" stroke-width="0.9"/>
<polygon points="42.1,269.2 44.0,270.6 45.5,272.3 45.5,273.5 43.1,276.0 41.1,276.0 38.7,273.5 38.7,272.3 40.3,270.6" fill="none" stroke="#9a10b0" stroke-width="0.9"/>
<polygon points="53.5,271.7 55.4,273.1 56.9,274.8 56.9,276.0 54.5,278.5 52.5,278.5 50.1,276.0 50.1,274.8 51.6,273.1" fill="none" stroke="#9a10b0" stroke-width="0.9"/>
<polygon points="64.9,274.2 66.7,275.5 68.3,277.2 68.3,278.4 65.9,281.0 63.9,281.0 61.5,278.4 61.5,277.2 63.0,275.5" fill="none" stroke="#9a10b0" stroke-width="0.9"/>
<polygon points="76.2,276.7 78.1,278.0 79.7,279.7 79.7,280.9 77.3,283.5 75.2,283.5 72.8,280.9 72.8,279.7 74.4,278.0" fill="none" stroke="#9a10b0" stroke-width="0.9"/>
<polygon points="87.6,279.1 89.5,280.5 91.0,282.2 91.0,283.4 88.6,285.9 86.6,285.9 84.2,283.4 84.2,282.2 85.8,280.5" fill="none" stroke="#9a10b0" stroke-width="0.9"/>
<polygon points="99.0,281.6 100.9,283.0 102.4,284.7 102.4,285.9 100.0,288.4 98.0,288.4 95.6,285.9 95.6,284.7 97.1,283.0" fill="none" stroke="#9a10b0" stroke-width="0.9"/>
<polygon points="110.4,284.1 112.2,285.4 113.8,287.1 113.8,288.3 111.4,290.9 109.4,290.9 107.0,288.3 107.0,287.1 108.5,285.4" fill="none" stroke="#9a10b0" stroke-width="0.9"/>
<polygon points="121.8,286.6 123.6,287.9 125.2,289.6 125.2,290.8 122.8,293.4 120.7,293.4 118.3,290.8 118.3,289.6 119.9,287.9" fill="none" stroke="#9a10b0" stroke-width="0.9"/>
<polygon points="140.0,270.4 141.9,271.8 143.4,273.5 143.4,274.7 141.0,277.2 139.0,277.2 136.6,274.7 136.6,273.5 138.1,271.8" fill="none" stroke="#9a10b0" stroke-width="0.9"/>
<polygon points="151.4,272.9 153.2,274.3 154.8,276.0 154.8,277.1 152.4,279.7 150.4,279.7 148.0,277.1 148.0,276.0 149.5,274.3" fill="none" stroke="#9a10b0" stroke-width="0.9"/>
<polygon points="162.8,275.4 164.6,276.7 166.2,278.4 166.2,279.6 163.8,282.2 161.7,282.2 159.3,279.6 159.3,278.4 160.9,276.7" fill="none" stroke="#9a10b0" stroke-width="0.9"/>
<polygon points="174.1,277.9 176.0,279.2 177.5,280.9 177.5,282.1 175.1,284.6 173.1,284.6 170.7,282.1 170.7,280.9 172.3,279.2" fill="none" stroke="#9a10b0" stroke-width="0.9"/>
<polygon points="185.5,280.3 187.4,281.7 188.9,283.4 188.9,284.6 186.5,287.1 184.5,287.1 182.1,284.6 182.1,283.4 183.6,281.7" fill="none" stroke="#9a10b0" stroke-width="0.9"/>
<polygon points="196.9,282.8 198.7,284.2 200.3,285.9 200.3,287.0 197.9,289.6 195.9,289.6 193.5,287.0 193.5,285.9 195.0,284.2" fill="none" stroke="#9a10b0" stroke-width="0.9"/>
<polygon points="208.2,285.3 210.1,286.6 211.7,288.3 211.7,289.5 209.3,292.1 207.2,292.1 204.8,289.5 204.8,288.3 206.4,286.6" fill="none" stroke="#9a10b0" stroke-width="0.9"/>
<polygon points="219.6,287.8 221.5,289.1 223.0,290.8 223.0,292.0 220.6,294.5 218.6,294.5 216.2,292.0 216.2,290.8 217.8,289.1" fill="none" stroke="#9a10b0" stroke-width="0.9"/>
<polygon points="231.0,290.2 232.9,291.6 234.4,293.3 234.4,294.5 232.0,297.0 230.0,297.0 227.6,294.5 227.6,293.3 229.1,291.6" fill="none" stroke="#9a10b0" stroke-width="0.9"/>
<polygon points="49.0,250.6 50.9,252.0 52.4,253.7 52.4,254.9 50.0,257.4 48.0,257.4 45.6,254.9 45.6,253.7 47.1,252.0" fill="none" stroke="#9a10b0" stroke-width="0.9"/>
<polygon points="60.4,253.1 62.2,254.5 63.8,256.2 63.8,257.4 61.4,259.9 59.4,259.9 57.0,257.4 57.0,256.2 58.5,254.5" fill="none" stroke="#9a10b0" stroke-width="0.9"/>
<polygon points="71.8,255.6 73.6,256.9 75.2,258.6 75.2,259.8 72.8,262.4 70.7,262.4 68.3,259.8 68.3,258.6 69.9,256.9" fill="none" stroke="#9a10b0" stroke-width="0.9"/>
<polygon points="83.1,258.0 85.0,259.4 86.5,261.1 86.5,262.3 84.1,264.8 82.1,264.8 79.7,262.3 79.7,261.1 81.3,259.4" fill="none" stroke="#9a10b0" stroke-width="0.9"/>
<polygon points="94.5,260.5 96.4,261.9 97.9,263.6 97.9,264.8 95.5,267.3 93.5,267.3 91.1,264.8 91.1,263.6 92.6,261.9" fill="none" stroke="#9a10b0" stroke-width="0.9"/>
<polygon points="105.9,263.0 107.7,264.4 109.3,266.1 109.3,267.2 106.9,269.8 104.9,269.8 102.5,267.2 102.5,266.1 104.0,264.4" fill="none" stroke="#9a10b0" stroke-width="0.9"/>
<polygon points="117.2,265.5 119.1,266.8 120.7,268.5 120.7,269.7 118.3,272.3 116.2,272.3 113.8,269.7 113.8,268.5 115.4,266.8" fill="none" stroke="#9a10b0" stroke-width="0.9"/>
<polygon points="128.6,268.0 130.5,269.3 132.0,271.0 132.0,272.2 129.6,274.8 127.6,274.8 125.2,272.2 125.2,271.0 126.8,269.3" fill="none" stroke="#9a10b0" stroke-width="0.9"/>
<polygon points="140.0,270.4 141.9,271.8 143.4,273.5 143.4,274.7 141.0,277.2 139.0,277.2 136.6,274.7 136.6,273.5 138.1,271.8" fill="none" stroke="#9a10b0" stroke-width="0.9"/>
<polygon points="67.2,234.5 69.1,235.8 70.7,237.5 70.7,238.7 68.3,241.3 66.2,241.3 63.9,238.7 63.9,237.5 65.4,235.8" fill="none" stroke="#9a10b0" stroke-width="0.9"/>
<polygon points="78.4,236.9 80.2,238.3 81.8,240.0 81.8,241.2 79.4,243.7 77.4,243.7 75.0,241.2 75.0,240.0 76.5,238.3" fill="none" stroke="#9a10b0" stroke-width="0.9"/>
<polygon points="89.5,239.3 91.4,240.7 92.9,242.4 92.9,243.6 90.5,246.1 88.5,246.1 86.1,243.6 86.1,242.4 87.6,240.7" fill="none" stroke="#9a10b0" stroke-width="0.9"/>
<polygon points="100.6,241.7 102.5,243.1 104.0,244.8 104.0,246.0 101.6,248.5 99.6,248.5 97.2,246.0 97.2,244.8 98.7,243.1" fill="none" stroke="#9a10b0" stroke-width="0.9"/>
<polygon points="111.7,244.2 113.6,245.5 115.1,247.2 115.1,248.4 112.8,251.0 110.7,251.0 108.3,248.4 108.3,247.2 109.9,245.5" fill="none" stroke="#9a10b0" stroke-width="0.9"/>
<polygon points="122.9,246.6 124.7,247.9 126.3,249.6 126.3,250.8 123.9,253.4 121.8,253.4 119.5,250.8 119.5,249.6 121.0,247.9" fill="none" stroke="#9a10b0" stroke-width="0.9"/>
<polygon points="134.0,249.0 135.9,250.4 137.4,252.1 137.4,253.3 135.0,255.8 133.0,255.8 130.6,253.3 130.6,252.1 132.1,250.4" fill="none" stroke="#9a10b0" stroke-width="0.9"/>
<polygon points="145.1,251.4 147.0,252.8 148.5,254.5 148.5,255.7 146.1,258.2 144.1,258.2 141.7,255.7 141.7,254.5 143.2,252.8" fill="none" stroke="#9a10b0" stroke-width="0.9"/>
<polygon points="156.2,253.8 158.1,255.2 159.6,256.9 159.6,258.1 157.2,260.6 155.2,260.6 152.8,258.1 152.8,256.9 154.4,255.2" fill="none" stroke="#9a10b0" stroke-width="0.9"/>
<polygon points="167.4,256.3 169.2,257.6 170.8,259.3 170.8,260.5 168.4,263.1 166.3,263.1 164.0,260.5 164.0,259.3 165.5,257.6" fill="none" stroke="#9a10b0" stroke-width="0.9"/>
<polygon points="178.5,258.7 180.3,260.0 181.9,261.7 181.9,262.9 179.5,265.5 177.5,265.5 175.1,262.9 175.1,261.7 176.6,260.0" fill="none" stroke="#9a10b0" stroke-width="0.9"/>
<polygon points="189.6,261.1 191.5,262.5 193.0,264.2 193.0,265.4 190.6,267.9 188.6,267.9 186.2,265.4 186.2,264.2 187.7,262.5" fill="none" stroke="#9a10b0" stroke-width="0.9"/>
<polygon points="200.7,263.5 202.6,264.9 204.1,266.6 204.1,267.8 201.7,270.3 199.7,270.3 197.3,267.8 197.3,266.6 198.8,264.9" fill="none" stroke="#9a10b0" stroke-width="0.9"/>
<polygon points="211.8,265.9 213.7,267.3 215.2,269.0 215.2,270.2 212.9,272.7 210.8,272.7 208.4,270.2 208.4,269.0 210.0,267.3" fill="none" stroke="#9a10b0" stroke-width="0.9"/>
<polygon points="223.0,268.4 224.8,269.7 226.4,271.4 226.4,272.6 224.0,275.2 221.9,275.2 219.6,272.6 219.6,271.4 221.1,269.7" fill="none" stroke="#9a10b0" stroke-width="0.9"/>
<polygon points="234.1,270.8 236.0,272.1 237.5,273.8 237.5,275.0 235.1,277.6 233.1,277.6 230.7,275.0 230.7,273.8 232.2,272.1" fill="none" stroke="#9a10b0" stroke-width="0.9"/>
<polygon points="85.5,218.3 87.4,219.7 88.9,221.4 88.9,222.6 86.5,225.1 84.5,225.1 82.1,222.6 82.1,221.4 83.6,219.7" fill="none" stroke="#9a10b0" stroke-width="0.9"/>
<polygon points="97.2,220.9 99.0,222.2 100.6,223.9 100.6,225.1 98.2,227.7 96.1,227.7 93.8,225.1 93.8,223.9 95.3,222.2" fill="none" stroke="#9a10b0" stroke-width="0.9"/>
<polygon points="108.8,223.4 110.7,224.8 112.2,226.5 112.2,227.7 109.9,230.2 107.8,230.2 105.4,227.7 105.4,226.5 107.0,224.8" fill="none" stroke="#9a10b0" stroke-width="0.9"/>
<polygon points="120.5,226.0 122.4,227.3 123.9,229.0 123.9,230.2 121.5,232.8 119.5,232.8 117.1,230.2 117.1,229.0 118.6,227.3" fill="none" stroke="#9a10b0" stroke-width="0.9"/>
<polygon points="132.2,228.5 134.0,229.9 135.6,231.6 135.6,232.8 133.2,235.3 131.1,235.3 128.8,232.8 128.8,231.6 130.3,229.9" fill="none" stroke="#9a10b0" stroke-width="0.9"/>
<polygon points="143.8,231.0 145.7,232.4 147.2,234.1 147.2,235.3 144.9,237.8 142.8,237.8 140.4,235.3 140.4,234.1 142.0,232.4" fill="none" stroke="#9a10b0" stroke-width="0.9"/>
<polygon points="155.5,233.6 157.4,234.9 158.9,236.6 158.9,237.8 156.5,240.4 154.5,240.4 152.1,237.8 152.1,236.6 153.6,234.9" fill="none" stroke="#9a10b0" stroke-width="0.9"/>
<polygon points="167.2,236.1 169.0,237.5 170.6,239.2 170.6,240.4 168.2,242.9 166.1,242.9 163.8,240.4 163.8,239.2 165.3,237.5" fill="none" stroke="#9a10b0" stroke-width="0.9"/>
<polygon points="178.8,238.7 180.7,240.0 182.2,241.7 182.2,242.9 179.9,245.5 177.8,245.5 175.4,242.9 175.4,241.7 177.0,240.0" fill="none" stroke="#9a10b0" stroke-width="0.9"/>
<polygon points="190.5,241.2 192.4,242.6 193.9,244.3 193.9,245.4 191.5,248.0 189.5,248.0 187.1,245.4 187.1,244.3 188.6,242.6" fill="none" stroke="#9a10b0" stroke-width="0.9"/>
<polygon points="202.2,243.7 204.0,245.1 205.6,246.8 205.6,248.0 203.2,250.5 201.1,250.5 198.8,248.0 198.8,246.8 200.3,245.1" fill="none" stroke="#9a10b0" stroke-width="0.9"/>
<polygon points="213.8,246.3 215.7,247.6 217.2,249.3 217.2,250.5 214.9,253.1 212.8,253.1 210.4,250.5 210.4,249.3 212.0,247.6" fill="none" stroke="#9a10b0" stroke-width="0.9"/>
<polygon points="225.5,248.8 227.4,250.2 228.9,251.9 228.9,253.1 226.5,255.6 224.5,255.6 222.1,253.1 222.1,251.9 223.6,250.2" fill="none" stroke="#9a10b0" stroke-width="0.9"/>
<polygon points="237.2,251.3 239.0,252.7 240.6,254.4 240.6,255.6 238.2,258.1 236.1,258.1 233.8,255.6 233.8,254.4 235.3,252.7" fill="none" stroke="#9a10b0" stroke-width="0.9"/>
<polygon points="103.8,202.2 105.6,203.6 107.2,205.3 107.2,206.5 104.8,209.0 102.7,209.0 100.3,206.5 100.3,205.3 101.9,203.6" fill="none" stroke="#9a10b0" stroke-width="0.9"/>
<polygon points="115.1,204.7 117.0,206.0 118.5,207.7 118.5,208.9 116.1,211.5 114.1,211.5 111.7,208.9 111.7,207.7 113.3,206.0" fill="none" stroke="#9a10b0" stroke-width="0.9"/>
<polygon points="126.5,207.2 128.4,208.5 129.9,210.2 129.9,211.4 127.5,214.0 125.5,214.0 123.1,211.4 123.1,210.2 124.6,208.5" fill="none" stroke="#9a10b0" stroke-width="0.9"/>
<polygon points="137.9,209.6 139.7,211.0 141.3,212.7 141.3,213.9 138.9,216.4 136.9,216.4 134.5,213.9 134.5,212.7 136.0,211.0" fill="none" stroke="#9a10b0" stroke-width="0.9"/>
<polygon points="149.2,212.1 151.1,213.5 152.7,215.2 152.7,216.4 150.3,218.9 148.2,218.9 145.8,216.4 145.8,215.2 147.4,213.5" fill="none" stroke="#9a10b0" stroke-width="0.9"/>
<polygon points="160.6,214.6 162.5,215.9 164.0,217.6 164.0,218.8 161.6,221.4 159.6,221.4 157.2,218.8 157.2,217.6 158.8,215.9" fill="none" stroke="#9a10b0" stroke-width="0.9"/>
<polygon points="172.0,217.1 173.9,218.4 175.4,220.1 175.4,221.3 173.0,223.9 171.0,223.9 168.6,221.3 168.6,220.1 170.1,218.4" fill="none" stroke="#9a10b0" stroke-width="0.9"/>
<polygon points="183.4,219.5 185.2,220.9 186.8,222.6 186.8,223.8 184.4,226.3 182.4,226.3 180.0,223.8 180.0,222.6 181.5,220.9" fill="none" stroke="#9a10b0" stroke-width="0.9"/>
<polygon points="194.8,222.0 196.6,223.4 198.2,225.1 198.2,226.3 195.8,228.8 193.7,228.8 191.3,226.3 191.3,225.1 192.9,223.4" fill="none" stroke="#9a10b0" stroke-width="0.9"/>
<polygon points="206.1,224.5 208.0,225.8 209.5,227.5 209.5,228.7 207.1,231.3 205.1,231.3 202.7,228.7 202.7,227.5 204.3,225.8" fill="none" stroke="#9a10b0" stroke-width="0.9"/>
<polygon points="217.5,227.0 219.4,228.3 220.9,230.0 220.9,231.2 218.5,233.8 216.5,233.8 214.1,231.2 214.1,230.0 215.6,228.3" fill="none" stroke="#9a10b0" stroke-width="0.9"/>
<polygon points="228.9,229.4 230.7,230.8 232.3,232.5 232.3,233.7 229.9,236.2 227.9,236.2 225.5,233.7 225.5,232.5 227.0,230.8" fill="none" stroke="#9a10b0" stroke-width="0.9"/>
<polygon points="240.2,231.9 242.1,233.3 243.7,235.0 243.7,236.2 241.3,238.7 239.2,238.7 236.8,236.2 236.8,235.0 238.4,233.3" fill="none" stroke="#9a10b0" stroke-width="0.9"/>
<polygon points="122.0,186.1 123.9,187.4 125.4,189.1 125.4,190.3 123.0,192.9 121.0,192.9 118.6,190.3 118.6,189.1 120.1,187.4" fill="none" stroke="#9a10b0" stroke-width="0.9"/>
<polygon points="133.0,188.5 134.9,189.8 136.4,191.5 136.4,192.7 134.1,195.3 132.0,195.3 129.6,192.7 129.6,191.5 131.2,189.8" fill="none" stroke="#9a10b0" stroke-width="0.9"/>
<polygon points="144.1,190.9 145.9,192.2 147.5,193.9 147.5,195.1 145.1,197.7 143.0,197.7 140.7,195.1 140.7,193.9 142.2,192.2" fill="none" stroke="#9a10b0" stroke-width="0.9"/>
<polygon points="155.1,193.3 157.0,194.6 158.5,196.3 158.5,197.5 156.1,200.1 154.1,200.1 151.7,197.5 151.7,196.3 153.2,194.6" fill="none" stroke="#9a10b0" stroke-width="0.9"/>
<polygon points="166.1,195.7 168.0,197.0 169.5,198.7 169.5,199.9 167.1,202.5 165.1,202.5 162.7,199.9 162.7,198.7 164.3,197.0" fill="none" stroke="#9a10b0" stroke-width="0.9"/>
<polygon points="177.2,198.1 179.0,199.4 180.6,201.1 180.6,202.3 178.2,204.9 176.1,204.9 173.8,202.3 173.8,201.1 175.3,199.4" fill="none" stroke="#9a10b0" stroke-width="0.9"/>
<polygon points="188.2,200.5 190.1,201.8 191.6,203.5 191.6,204.7 189.2,207.3 187.2,207.3 184.8,204.7 184.8,203.5 186.3,201.8" fill="none" stroke="#9a10b0" stroke-width="0.9"/>
<polygon points="199.2,202.9 201.1,204.2 202.6,205.9 202.6,207.1 200.2,209.7 198.2,209.7 195.8,207.1 195.8,205.9 197.3,204.2" fill="none" stroke="#9a10b0" stroke-width="0.9"/>
<polygon points="210.2,205.3 212.1,206.6 213.6,208.3 213.6,209.5 211.3,212.1 209.2,212.1 206.8,209.5 206.8,208.3 208.4,206.6" fill="none" stroke="#9a10b0" stroke-width="0.9"/>
<polygon points="221.3,207.7 223.1,209.0 224.7,210.7 224.7,211.9 222.3,214.5 220.3,214.5 217.9,211.9 217.9,210.7 219.4,209.0" fill="none" stroke="#9a10b0" stroke-width="0.9"/>
<polygon points="232.3,210.1 234.2,211.4 235.7,213.1 235.7,214.3 233.3,216.9 231.3,216.9 228.9,214.3 228.9,213.1 230.4,211.4" fill="none" stroke="#9a10b0" stroke-width="0.9"/>
<polygon points="243.3,212.5 245.2,213.8 246.7,215.5 246.7,216.7 244.4,219.3 242.3,219.3 239.9,216.7 239.9,215.5 241.5,213.8" fill="none" stroke="#9a10b0" stroke-width="0.9"/>
<polygon points="140.2,169.9 142.1,171.3 143.7,173.0 143.7,174.2 141.3,176.7 139.2,176.7 136.8,174.2 136.8,173.0 138.4,171.3" fill="none" stroke="#9a10b0" stroke-width="0.9"/>
<polygon points="152.0,172.5 153.9,173.9 155.4,175.6 155.4,176.8 153.1,179.3 151.0,179.3 148.6,176.8 148.6,175.6 150.2,173.9" fill="none" stroke="#9a10b0" stroke-width="0.9"/>
<polygon points="163.8,175.1 165.7,176.4 167.2,178.1 167.2,179.3 164.9,181.9 162.8,181.9 160.4,179.3 160.4,178.1 162.0,176.4" fill="none" stroke="#9a10b0" stroke-width="0.9"/>
<polygon points="175.6,177.6 177.5,179.0 179.0,180.7 179.0,181.9 176.7,184.4 174.6,184.4 172.2,181.9 172.2,180.7 173.8,179.0" fill="none" stroke="#9a10b0" stroke-width="0.9"/>
<polygon points="187.4,180.2 189.3,181.6 190.8,183.3 190.8,184.5 188.5,187.0 186.4,187.0 184.0,184.5 184.0,183.3 185.6,181.6" fill="none" stroke="#9a10b0" stroke-width="0.9"/>
<polygon points="199.2,182.8 201.1,184.1 202.6,185.8 202.6,187.0 200.3,189.6 198.2,189.6 195.8,187.0 195.8,185.8 197.4,184.1" fill="none" stroke="#9a10b0" stroke-width="0.9"/>
<polygon points="211.0,185.3 212.9,186.7 214.4,188.4 214.4,189.6 212.0,192.1 210.0,192.1 207.6,189.6 207.6,188.4 209.2,186.7" fill="none" stroke="#9a10b0" stroke-width="0.9"/>
<polygon points="222.8,187.9 224.7,189.3 226.2,191.0 226.2,192.2 223.8,194.7 221.8,194.7 219.4,192.2 219.4,191.0 221.0,189.3" fill="none" stroke="#9a10b0" stroke-width="0.9"/>
<polygon points="234.6,190.5 236.5,191.8 238.0,193.5 238.0,194.7 235.6,197.3 233.6,197.3 231.2,194.7 231.2,193.5 232.8,191.8" fill="none" stroke="#9a10b0" stroke-width="0.9"/>
<polygon points="246.4,193.0 248.3,194.4 249.8,196.1 249.8,197.3 247.4,199.8 245.4,199.8 243.0,197.3 243.0,196.1 244.5,194.4" fill="none" stroke="#9a10b0" stroke-width="0.9"/>
<polygon points="252.3,269.0 254.2,270.3 255.7,272.0 255.7,273.2 253.4,275.8 251.3,275.8 248.9,273.2 248.9,272.0 250.5,270.3" fill="none" stroke="#9a10b0" stroke-width="0.9"/>
<polygon points="270.6,267.3 272.5,268.6 274.0,270.3 274.0,271.5 271.6,274.1 269.6,274.1 267.2,271.5 267.2,270.3 268.7,268.6" fill="none" stroke="#9a10b0" stroke-width="0.9"/>
<polygon points="288.8,265.6 290.7,266.9 292.2,268.6 292.2,269.8 289.9,272.4 287.8,272.4 285.4,269.8 285.4,268.6 287.0,266.9" fill="none" stroke="#9a10b0" stroke-width="0.9"/>
<polygon points="307.1,263.9 309.0,265.2 310.5,266.9 310.5,268.1 308.1,270.7 306.1,270.7 303.7,268.1 303.7,266.9 305.2,265.2" fill="none" stroke="#9a10b0" stroke-width="0.9"/>
<polygon points="325.3,262.2 327.2,263.5 328.7,265.2 328.7,266.4 326.4,269.0 324.3,269.0 321.9,266.4 321.9,265.2 323.5,263.5" fill="none" stroke="#9a10b0" stroke-width="0.9"/>
<polygon points="343.6,260.5 345.5,261.8 347.0,263.5 347.0,264.7 344.6,267.3 342.6,267.3 340.2,264.7 340.2,263.5 341.7,261.8" fill="none" stroke="#9a10b0" stroke-width="0.9"/>
<polygon points="361.8,258.8 363.7,260.1 365.2,261.8 365.2,263.0 362.9,265.6 360.8,265.6 358.4,263.0 358.4,261.8 360.0,260.1" fill="none" stroke="#9a10b0" stroke-width="0.9"/>
<polygon points="380.1,257.1 382.0,258.4 383.5,260.1 383.5,261.3 381.1,263.9 379.1,263.9 376.7,261.3 376.7,260.1 378.2,258.4" fill="none" stroke="#9a10b0" stroke-width="0.9"/>
<polygon points="398.3,255.4 400.2,256.7 401.7,258.4 401.7,259.6 399.4,262.2 397.3,262.2 394.9,259.6 394.9,258.4 396.5,256.7" fill="none" stroke="#9a10b0" stroke-width="0.9"/>
<polygon points="416.6,253.7 418.5,255.0 420.0,256.7 420.0,257.9 417.6,260.5 415.6,260.5 413.2,257.9 413.2,256.7 414.7,255.0" fill="none" stroke="#9a10b0" stroke-width="0.9"/>
<polygon points="234.1,270.7 236.0,272.0 237.5,273.7 237.5,274.9 235.1,277.5 233.1,277.5 230.7,274.9 230.7,273.7 232.2,272.0" fill="none" stroke="#9a10b0" stroke-width="0.9"/>
<polygon points="416.6,253.7 418.5,255.0 420.0,256.7 420.0,257.9 417.6,260.5 415.6,260.5 413.2,257.9 413.2,256.7 414.7,255.0" fill="none" stroke="#9a10b0" stroke-width="0.9"/>
<polygon points="255.4,249.6 257.3,250.9 258.8,252.6 258.8,253.8 256.4,256.4 254.4,256.4 252.0,253.8 252.0,252.6 253.5,250.9" fill="none" stroke="#9a10b0" stroke-width="0.9"/>
<polygon points="273.7,247.9 275.5,249.2 277.1,250.9 277.1,252.1 274.7,254.7 272.6,254.7 270.3,252.1 270.3,250.9 271.8,249.2" fill="none" stroke="#9a10b0" stroke-width="0.9"/>
<polygon points="291.9,246.2 293.8,247.5 295.3,249.2 295.3,250.4 292.9,253.0 290.9,253.0 288.5,250.4 288.5,249.2 290.0,247.5" fill="none" stroke="#9a10b0" stroke-width="0.9"/>
<polygon points="310.2,244.5 312.0,245.8 313.6,247.5 313.6,248.7 311.2,251.3 309.1,251.3 306.8,248.7 306.8,247.5 308.3,245.8" fill="none" stroke="#9a10b0" stroke-width="0.9"/>
<polygon points="328.4,242.8 330.3,244.1 331.8,245.8 331.8,247.0 329.4,249.6 327.4,249.6 325.0,247.0 325.0,245.8 326.5,244.1" fill="none" stroke="#9a10b0" stroke-width="0.9"/>
<polygon points="346.7,241.1 348.5,242.4 350.1,244.1 350.1,245.3 347.7,247.9 345.6,247.9 343.3,245.3 343.3,244.1 344.8,242.4" fill="none" stroke="#9a10b0" stroke-width="0.9"/>
<polygon points="364.9,239.4 366.8,240.7 368.3,242.4 368.3,243.6 365.9,246.2 363.9,246.2 361.5,243.6 361.5,242.4 363.0,240.7" fill="none" stroke="#9a10b0" stroke-width="0.9"/>
<polygon points="383.2,237.7 385.0,239.0 386.6,240.7 386.6,241.9 384.2,244.5 382.1,244.5 379.8,241.9 379.8,240.7 381.3,239.0" fill="none" stroke="#9a10b0" stroke-width="0.9"/>
<polygon points="237.2,251.3 239.0,252.6 240.6,254.3 240.6,255.5 238.2,258.1 236.1,258.1 233.8,255.5 233.8,254.3 235.3,252.6" fill="none" stroke="#9a10b0" stroke-width="0.9"/>
<polygon points="383.2,237.7 385.0,239.0 386.6,240.7 386.6,241.9 384.2,244.5 382.1,244.5 379.8,241.9 379.8,240.7 381.3,239.0" fill="none" stroke="#9a10b0" stroke-width="0.9"/>
<polygon points="240.2,231.8 242.1,233.2 243.7,234.9 243.7,236.1 241.3,238.7 239.2,238.7 236.8,236.1 236.8,234.9 238.4,233.2" fill="none" stroke="#9a10b0" stroke-width="0.9"/>
<polygon points="258.5,230.1 260.4,231.5 261.9,233.2 261.9,234.4 259.5,236.9 257.5,236.9 255.1,234.4 255.1,233.2 256.6,231.5" fill="none" stroke="#9a10b0" stroke-width="0.9"/>
<polygon points="276.8,228.5 278.6,229.8 280.1,231.5 280.1,232.7 277.8,235.3 275.7,235.3 273.4,232.7 273.4,231.5 274.9,229.8" fill="none" stroke="#9a10b0" stroke-width="0.9"/>
<polygon points="295.0,226.7 296.9,228.1 298.4,229.8 298.4,231.0 296.0,233.5 294.0,233.5 291.6,231.0 291.6,229.8 293.1,228.1" fill="none" stroke="#9a10b0" stroke-width="0.9"/>
<polygon points="313.2,225.1 315.1,226.4 316.6,228.1 316.6,229.3 314.3,231.9 312.2,231.9 309.9,229.3 309.9,228.1 311.4,226.4" fill="none" stroke="#9a10b0" stroke-width="0.9"/>
<polygon points="331.5,223.3 333.4,224.7 334.9,226.4 334.9,227.6 332.5,230.2 330.5,230.2 328.1,227.6 328.1,226.4 329.6,224.7" fill="none" stroke="#9a10b0" stroke-width="0.9"/>
<polygon points="349.8,221.6 351.6,223.0 353.1,224.7 353.1,225.9 350.8,228.4 348.7,228.4 346.4,225.9 346.4,224.7 347.9,223.0" fill="none" stroke="#9a10b0" stroke-width="0.9"/>
<polygon points="240.2,231.8 242.1,233.2 243.7,234.9 243.7,236.1 241.3,238.7 239.2,238.7 236.8,236.1 236.8,234.9 238.4,233.2" fill="none" stroke="#9a10b0" stroke-width="0.9"/>
<polygon points="349.8,221.6 351.6,223.0 353.1,224.7 353.1,225.9 350.8,228.4 348.7,228.4 346.4,225.9 346.4,224.7 347.9,223.0" fill="none" stroke="#9a10b0" stroke-width="0.9"/>
<polygon points="261.6,210.7 263.5,212.1 265.0,213.8 265.0,215.0 262.6,217.5 260.6,217.5 258.2,215.0 258.2,213.8 259.7,212.1" fill="none" stroke="#9a10b0" stroke-width="0.9"/>
<polygon points="279.8,209.0 281.7,210.4 283.2,212.1 283.2,213.3 280.9,215.8 278.8,215.8 276.4,213.3 276.4,212.1 278.0,210.4" fill="none" stroke="#9a10b0" stroke-width="0.9"/>
<polygon points="298.1,207.3 300.0,208.7 301.5,210.4 301.5,211.6 299.1,214.1 297.1,214.1 294.7,211.6 294.7,210.4 296.2,208.7" fill="none" stroke="#9a10b0" stroke-width="0.9"/>
<polygon points="316.3,205.6 318.2,207.0 319.7,208.7 319.7,209.9 317.4,212.4 315.3,212.4 312.9,209.9 312.9,208.7 314.5,207.0" fill="none" stroke="#9a10b0" stroke-width="0.9"/>
<polygon points="243.3,212.4 245.2,213.8 246.7,215.5 246.7,216.7 244.4,219.2 242.3,219.2 239.9,216.7 239.9,215.5 241.5,213.8" fill="none" stroke="#9a10b0" stroke-width="0.9"/>
<polygon points="316.3,205.6 318.2,207.0 319.7,208.7 319.7,209.9 317.4,212.4 315.3,212.4 312.9,209.9 312.9,208.7 314.5,207.0" fill="none" stroke="#9a10b0" stroke-width="0.9"/>
<polygon points="264.7,191.3 266.5,192.7 268.1,194.4 268.1,195.6 265.7,198.1 263.6,198.1 261.3,195.6 261.3,194.4 262.8,192.7" fill="none" stroke="#9a10b0" stroke-width="0.9"/>
<polygon points="282.9,189.6 284.8,191.0 286.3,192.7 286.3,193.9 283.9,196.4 281.9,196.4 279.5,193.9 279.5,192.7 281.0,191.0" fill="none" stroke="#9a10b0" stroke-width="0.9"/>
<polygon points="246.4,193.0 248.3,194.4 249.8,196.1 249.8,197.3 247.4,199.8 245.4,199.8 243.0,197.3 243.0,196.1 244.5,194.4" fill="none" stroke="#9a10b0" stroke-width="0.9"/>
<polygon points="282.9,189.6 284.8,191.0 286.3,192.7 286.3,193.9 283.9,196.4 281.9,196.4 279.5,193.9 279.5,192.7 281.0,191.0" fill="none" stroke="#9a10b0" stroke-width="0.9"/>
<polygon points="12.5,284.4 14.4,285.8 15.9,287.5 15.9,288.6 13.5,291.2 11.5,291.2 9.1,288.6 9.1,287.5 10.6,285.8" fill="none" stroke="#9a10b0" stroke-width="0.9"/>
<polygon points="23.9,286.9 25.7,288.2 27.3,289.9 27.3,291.1 24.9,293.7 22.9,293.7 20.5,291.1 20.5,289.9 22.0,288.2" fill="none" stroke="#9a10b0" stroke-width="0.9"/>
<polygon points="35.2,289.3 37.1,290.7 38.6,292.4 38.6,293.6 36.3,296.1 34.2,296.1 31.9,293.6 31.9,292.4 33.4,290.7" fill="none" stroke="#9a10b0" stroke-width="0.9"/>
<polygon points="46.6,291.8 48.5,293.2 50.0,294.9 50.0,296.1 47.6,298.6 45.6,298.6 43.2,296.1 43.2,294.9 44.8,293.2" fill="none" stroke="#9a10b0" stroke-width="0.9"/>
<polygon points="58.0,294.3 59.9,295.7 61.4,297.4 61.4,298.5 59.0,301.1 57.0,301.1 54.6,298.5 54.6,297.4 56.1,295.7" fill="none" stroke="#9a10b0" stroke-width="0.9"/>
<polygon points="69.4,296.8 71.2,298.1 72.8,299.8 72.8,301.0 70.4,303.6 68.4,303.6 66.0,301.0 66.0,299.8 67.5,298.1" fill="none" stroke="#9a10b0" stroke-width="0.9"/>
<polygon points="80.8,299.2 82.6,300.6 84.2,302.3 84.2,303.5 81.8,306.0 79.7,306.0 77.3,303.5 77.3,302.3 78.9,300.6" fill="none" stroke="#9a10b0" stroke-width="0.9"/>
<polygon points="92.1,301.7 94.0,303.1 95.5,304.8 95.5,306.0 93.1,308.5 91.1,308.5 88.7,306.0 88.7,304.8 90.3,303.1" fill="none" stroke="#9a10b0" stroke-width="0.9"/>
<polygon points="103.5,304.2 105.4,305.6 106.9,307.3 106.9,308.4 104.5,311.0 102.5,311.0 100.1,308.4 100.1,307.3 101.6,305.6" fill="none" stroke="#9a10b0" stroke-width="0.9"/>
<polygon points="103.5,304.2 105.4,305.6 106.9,307.3 106.9,308.4 104.5,311.0 102.5,311.0 100.1,308.4 100.1,307.3 101.6,305.6" fill="none" stroke="#9a10b0" stroke-width="0.9"/>
<polygon points="115.7,293.4 117.5,294.8 119.1,296.5 119.1,297.6 116.7,300.2 114.6,300.2 112.3,297.6 112.3,296.5 113.8,294.8" fill="none" stroke="#9a10b0" stroke-width="0.9"/>
<polygon points="127.8,282.6 129.7,284.0 131.2,285.7 131.2,286.8 128.9,289.4 126.8,289.4 124.4,286.8 124.4,285.7 126.0,284.0" fill="none" stroke="#9a10b0" stroke-width="0.9"/>
<polygon points="140.0,271.8 141.9,273.2 143.4,274.9 143.4,276.0 141.0,278.6 139.0,278.6 136.6,276.0 136.6,274.9 138.1,273.2" fill="none" stroke="#9a10b0" stroke-width="0.9"/>
<polygon points="140.0,271.8 141.9,273.2 143.4,274.9 143.4,276.0 141.0,278.6 139.0,278.6 136.6,276.0 136.6,274.9 138.1,273.2" fill="none" stroke="#9a10b0" stroke-width="0.9"/>
<polygon points="151.4,274.3 153.2,275.6 154.8,277.3 154.8,278.5 152.4,281.1 150.4,281.1 148.0,278.5 148.0,277.3 149.5,275.6" fill="none" stroke="#9a10b0" stroke-width="0.9"/>
<polygon points="162.8,276.8 164.6,278.1 166.2,279.8 166.2,281.0 163.8,283.5 161.7,283.5 159.3,281.0 159.3,279.8 160.9,278.1" fill="none" stroke="#9a10b0" stroke-width="0.9"/>
<polygon points="174.1,279.2 176.0,280.6 177.5,282.3 177.5,283.5 175.1,286.0 173.1,286.0 170.7,283.5 170.7,282.3 172.3,280.6" fill="none" stroke="#9a10b0" stroke-width="0.9"/>
<polygon points="185.5,281.7 187.4,283.1 188.9,284.8 188.9,285.9 186.5,288.5 184.5,288.5 182.1,285.9 182.1,284.8 183.6,283.1" fill="none" stroke="#9a10b0" stroke-width="0.9"/>
<polygon points="196.9,284.2 198.7,285.5 200.3,287.2 200.3,288.4 197.9,291.0 195.9,291.0 193.5,288.4 193.5,287.2 195.0,285.5" fill="none" stroke="#9a10b0" stroke-width="0.9"/>
<polygon points="208.2,286.6 210.1,288.0 211.7,289.7 211.7,290.9 209.3,293.4 207.2,293.4 204.8,290.9 204.8,289.7 206.4,288.0" fill="none" stroke="#9a10b0" stroke-width="0.9"/>
<polygon points="219.6,289.1 221.5,290.5 223.0,292.2 223.0,293.4 220.6,295.9 218.6,295.9 216.2,293.4 216.2,292.2 217.8,290.5" fill="none" stroke="#9a10b0" stroke-width="0.9"/>
<polygon points="231.0,291.6 232.9,293.0 234.4,294.7 234.4,295.9 232.0,298.4 230.0,298.4 227.6,295.9 227.6,294.7 229.1,293.0" fill="none" stroke="#9a10b0" stroke-width="0.9"/>
<polygon points="231.0,291.6 232.9,293.0 234.4,294.7 234.4,295.9 232.0,298.4 230.0,298.4 227.6,295.9 227.6,294.7 229.1,293.0" fill="none" stroke="#9a10b0" stroke-width="0.9"/>
<polygon points="249.2,289.9 251.1,291.3 252.7,293.0 252.7,294.2 250.3,296.7 248.2,296.7 245.8,294.2 245.8,293.0 247.4,291.3" fill="none" stroke="#9a10b0" stroke-width="0.9"/>
<polygon points="267.5,288.2 269.4,289.6 270.9,291.3 270.9,292.5 268.5,295.0 266.5,295.0 264.1,292.5 264.1,291.3 265.6,289.6" fill="none" stroke="#9a10b0" stroke-width="0.9"/>
<polygon points="285.8,286.5 287.6,287.9 289.1,289.6 289.1,290.8 286.8,293.3 284.7,293.3 282.4,290.8 282.4,289.6 283.9,287.9" fill="none" stroke="#9a10b0" stroke-width="0.9"/>
<polygon points="304.0,284.8 305.9,286.2 307.4,287.9 307.4,289.1 305.0,291.6 303.0,291.6 300.6,289.1 300.6,287.9 302.1,286.2" fill="none" stroke="#9a10b0" stroke-width="0.9"/>
<polygon points="322.2,283.1 324.1,284.5 325.6,286.2 325.6,287.4 323.3,289.9 321.2,289.9 318.9,287.4 318.9,286.2 320.4,284.5" fill="none" stroke="#9a10b0" stroke-width="0.9"/>
<polygon points="340.5,281.4 342.4,282.8 343.9,284.5 343.9,285.7 341.5,288.2 339.5,288.2 337.1,285.7 337.1,284.5 338.6,282.8" fill="none" stroke="#9a10b0" stroke-width="0.9"/>
<polygon points="358.8,279.7 360.6,281.1 362.1,282.8 362.1,284.0 359.8,286.5 357.7,286.5 355.4,284.0 355.4,282.8 356.9,281.1" fill="none" stroke="#9a10b0" stroke-width="0.9"/>
<polygon points="377.0,278.0 378.9,279.4 380.4,281.1 380.4,282.3 378.0,284.8 376.0,284.8 373.6,282.3 373.6,281.1 375.1,279.4" fill="none" stroke="#9a10b0" stroke-width="0.9"/>
<polygon points="395.2,276.3 397.1,277.7 398.6,279.4 398.6,280.6 396.3,283.1 394.2,283.1 391.9,280.6 391.9,279.4 393.4,277.7" fill="none" stroke="#9a10b0" stroke-width="0.9"/>
<polygon points="413.5,274.6 415.4,276.0 416.9,277.7 416.9,278.9 414.5,281.4 412.5,281.4 410.1,278.9 410.1,277.7 411.6,276.0" fill="none" stroke="#9a10b0" stroke-width="0.9"/>
<polygon points="431.8,272.9 433.6,274.3 435.1,276.0 435.1,277.2 432.8,279.7 430.7,279.7 428.4,277.2 428.4,276.0 429.9,274.3" fill="none" stroke="#9a10b0" stroke-width="0.9"/>
<polygon points="450.0,271.2 451.9,272.6 453.4,274.3 453.4,275.5 451.0,278.0 449.0,278.0 446.6,275.5 446.6,274.3 448.1,272.6" fill="none" stroke="#9a10b0" stroke-width="0.9"/>
<polygon points="450.0,269.7 451.9,271.1 453.4,272.8 453.4,274.0 451.0,276.5 449.0,276.5 446.6,274.0 446.6,272.8 448.1,271.1" fill="none" stroke="#9a10b0" stroke-width="0.9"/>
<polygon points="431.8,261.0 433.6,262.3 435.2,264.0 435.2,265.2 432.8,267.8 430.8,267.8 428.4,265.2 428.4,264.0 429.9,262.3" fill="none" stroke="#9a10b0" stroke-width="0.9"/>
<polygon points="413.5,252.2 415.4,253.6 416.9,255.3 416.9,256.5 414.6,259.0 412.5,259.0 410.1,256.5 410.1,255.3 411.7,253.6" fill="none" stroke="#9a10b0" stroke-width="0.9"/>
<polygon points="395.3,243.5 397.2,244.9 398.7,246.6 398.7,247.7 396.3,250.3 394.3,250.3 391.9,247.7 391.9,246.6 393.4,244.9" fill="none" stroke="#9a10b0" stroke-width="0.9"/>
<polygon points="377.1,234.8 379.0,236.1 380.5,237.8 380.5,239.0 378.1,241.6 376.1,241.6 373.7,239.0 373.7,237.8 375.2,236.1" fill="none" stroke="#9a10b0" stroke-width="0.9"/>
<polygon points="358.9,226.0 360.7,227.4 362.3,229.1 362.3,230.3 359.9,232.8 357.8,232.8 355.5,230.3 355.5,229.1 357.0,227.4" fill="none" stroke="#9a10b0" stroke-width="0.9"/>
<polygon points="340.6,217.3 342.5,218.6 344.0,220.3 344.0,221.5 341.7,224.1 339.6,224.1 337.2,221.5 337.2,220.3 338.8,218.6" fill="none" stroke="#9a10b0" stroke-width="0.9"/>
<polygon points="322.4,208.5 324.3,209.9 325.8,211.6 325.8,212.8 323.4,215.3 321.4,215.3 319.0,212.8 319.0,211.6 320.5,209.9" fill="none" stroke="#9a10b0" stroke-width="0.9"/>
<polygon points="304.2,199.8 306.1,201.2 307.6,202.9 307.6,204.1 305.2,206.6 303.2,206.6 300.8,204.1 300.8,202.9 302.3,201.2" fill="none" stroke="#9a10b0" stroke-width="0.9"/>
<polygon points="286.0,191.1 287.8,192.4 289.4,194.1 289.4,195.3 287.0,197.9 284.9,197.9 282.6,195.3 282.6,194.1 284.1,192.4" fill="none" stroke="#9a10b0" stroke-width="0.9"/>
<polygon points="267.7,182.3 269.6,183.7 271.1,185.4 271.1,186.6 268.7,189.1 266.7,189.1 264.3,186.6 264.3,185.4 265.9,183.7" fill="none" stroke="#9a10b0" stroke-width="0.9"/>
<polygon points="249.5,173.6 251.4,175.0 252.9,176.7 252.9,177.8 250.5,180.4 248.5,180.4 246.1,177.8 246.1,176.7 247.6,175.0" fill="none" stroke="#9a10b0" stroke-width="0.9"/>
<polygon points="249.5,173.6 251.4,175.0 252.9,176.7 252.9,177.8 250.5,180.4 248.5,180.4 246.1,177.8 246.1,176.7 247.6,175.0" fill="none" stroke="#9a10b0" stroke-width="0.9"/>
<polygon points="238.1,171.1 240.0,172.5 241.5,174.2 241.5,175.4 239.1,177.9 237.1,177.9 234.7,175.4 234.7,174.2 236.3,172.5" fill="none" stroke="#9a10b0" stroke-width="0.9"/>
<polygon points="226.8,168.6 228.6,170.0 230.2,171.7 230.2,172.9 227.8,175.4 225.7,175.4 223.3,172.9 223.3,171.7 224.9,170.0" fill="none" stroke="#9a10b0" stroke-width="0.9"/>
<polygon points="215.4,166.2 217.2,167.5 218.8,169.2 218.8,170.4 216.4,173.0 214.4,173.0 212.0,170.4 212.0,169.2 213.5,167.5" fill="none" stroke="#9a10b0" stroke-width="0.9"/>
<polygon points="204.0,163.7 205.9,165.1 207.4,166.8 207.4,167.9 205.0,170.5 203.0,170.5 200.6,167.9 200.6,166.8 202.1,165.1" fill="none" stroke="#9a10b0" stroke-width="0.9"/>
<polygon points="192.6,161.2 194.5,162.6 196.0,164.3 196.0,165.5 193.6,168.0 191.6,168.0 189.2,165.5 189.2,164.3 190.8,162.6" fill="none" stroke="#9a10b0" stroke-width="0.9"/>
<polygon points="181.2,158.7 183.1,160.1 184.7,161.8 184.7,163.0 182.3,165.5 180.2,165.5 177.8,163.0 177.8,161.8 179.4,160.1" fill="none" stroke="#9a10b0" stroke-width="0.9"/>
<polygon points="169.9,156.3 171.7,157.6 173.3,159.3 173.3,160.5 170.9,163.1 168.9,163.1 166.5,160.5 166.5,159.3 168.0,157.6" fill="none" stroke="#9a10b0" stroke-width="0.9"/>
<polygon points="158.5,153.8 160.4,155.2 161.9,156.9 161.9,158.0 159.5,160.6 157.5,160.6 155.1,158.0 155.1,156.9 156.6,155.2" fill="none" stroke="#9a10b0" stroke-width="0.9"/>
<polygon points="158.5,153.8 160.4,155.2 161.9,156.9 161.9,158.0 159.5,160.6 157.5,160.6 155.1,158.0 155.1,156.9 156.6,155.2" fill="none" stroke="#9a10b0" stroke-width="0.9"/>
<polygon points="149.4,161.9 151.2,163.2 152.8,164.9 152.8,166.1 150.4,168.7 148.4,168.7 146.0,166.1 146.0,164.9 147.5,163.2" fill="none" stroke="#9a10b0" stroke-width="0.9"/>
<polygon points="140.2,169.9 142.1,171.3 143.7,173.0 143.7,174.2 141.3,176.7 139.2,176.7 136.8,174.2 136.8,173.0 138.4,171.3" fill="none" stroke="#9a10b0" stroke-width="0.9"/>
<polygon points="131.1,178.0 133.0,179.4 134.5,181.1 134.5,182.3 132.1,184.8 130.1,184.8 127.7,182.3 127.7,181.1 129.3,179.4" fill="none" stroke="#9a10b0" stroke-width="0.9"/>
<polygon points="122.0,186.1 123.9,187.4 125.4,189.1 125.4,190.3 123.0,192.9 121.0,192.9 118.6,190.3 118.6,189.1 120.1,187.4" fill="none" stroke="#9a10b0" stroke-width="0.9"/>
<polygon points="112.9,194.1 114.7,195.5 116.3,197.2 116.3,198.4 113.9,200.9 111.9,200.9 109.5,198.4 109.5,197.2 111.0,195.5" fill="none" stroke="#9a10b0" stroke-width="0.9"/>
<polygon points="103.8,202.2 105.6,203.6 107.2,205.3 107.2,206.5 104.8,209.0 102.7,209.0 100.3,206.5 100.3,205.3 101.9,203.6" fill="none" stroke="#9a10b0" stroke-width="0.9"/>
<polygon points="94.6,210.3 96.5,211.6 98.0,213.3 98.0,214.5 95.6,217.1 93.6,217.1 91.2,214.5 91.2,213.3 92.8,211.6" fill="none" stroke="#9a10b0" stroke-width="0.9"/>
<polygon points="85.5,218.3 87.4,219.7 88.9,221.4 88.9,222.6 86.5,225.1 84.5,225.1 82.1,222.6 82.1,221.4 83.6,219.7" fill="none" stroke="#9a10b0" stroke-width="0.9"/>
<polygon points="76.4,226.4 78.2,227.8 79.8,229.5 79.8,230.7 77.4,233.2 75.4,233.2 73.0,230.7 73.0,229.5 74.5,227.8" fill="none" stroke="#9a10b0" stroke-width="0.9"/>
<polygon points="67.2,234.5 69.1,235.8 70.7,237.5 70.7,238.7 68.3,241.3 66.2,241.3 63.9,238.7 63.9,237.5 65.4,235.8" fill="none" stroke="#9a10b0" stroke-width="0.9"/>
<polygon points="58.1,242.6 60.0,243.9 61.5,245.6 61.5,246.8 59.1,249.4 57.1,249.4 54.7,246.8 54.7,245.6 56.3,243.9" fill="none" stroke="#9a10b0" stroke-width="0.9"/>
<polygon points="49.0,250.6 50.9,252.0 52.4,253.7 52.4,254.9 50.0,257.4 48.0,257.4 45.6,254.9 45.6,253.7 47.1,252.0" fill="none" stroke="#9a10b0" stroke-width="0.9"/>
<polygon points="39.9,258.7 41.7,260.1 43.3,261.8 43.3,262.9 40.9,265.5 38.9,265.5 36.5,262.9 36.5,261.8 38.0,260.1" fill="none" stroke="#9a10b0" stroke-width="0.9"/>
<polygon points="30.8,266.8 32.6,268.1 34.1,269.8 34.1,271.0 31.8,273.6 29.7,273.6 27.4,271.0 27.4,269.8 28.9,268.1" fill="none" stroke="#9a10b0" stroke-width="0.9"/>
<polygon points="21.6,274.8 23.5,276.2 25.0,277.9 25.0,279.1 22.6,281.6 20.6,281.6 18.2,279.1 18.2,277.9 19.8,276.2" fill="none" stroke="#9a10b0" stroke-width="0.9"/>
<polygon points="12.5,282.9 14.4,284.3 15.9,286.0 15.9,287.1 13.5,289.7 11.5,289.7 9.1,287.1 9.1,286.0 10.6,284.3" fill="none" stroke="#9a10b0" stroke-width="0.9"/>
<polygon points="249.5,173.6 251.4,175.0 252.9,176.7 252.9,177.8 250.5,180.4 248.5,180.4 246.1,177.8 246.1,176.7 247.6,175.0" fill="none" stroke="#9a10b0" stroke-width="0.9"/>
<polygon points="246.4,193.0 248.3,194.4 249.8,196.1 249.8,197.3 247.4,199.8 245.4,199.8 243.0,197.3 243.0,196.1 244.5,194.4" fill="none" stroke="#9a10b0" stroke-width="0.9"/>
<polygon points="243.3,212.4 245.2,213.8 246.7,215.5 246.7,216.7 244.4,219.2 242.3,219.2 239.9,216.7 239.9,215.5 241.5,213.8" fill="none" stroke="#9a10b0" stroke-width="0.9"/>
<polygon points="240.2,231.8 242.1,233.2 243.7,234.9 243.7,236.1 241.3,238.6 239.2,238.6 236.8,236.1 236.8,234.9 238.4,233.2" fill="none" stroke="#9a10b0" stroke-width="0.9"/>
<polygon points="237.2,251.3 239.0,252.6 240.6,254.3 240.6,255.5 238.2,258.1 236.1,258.1 233.8,255.5 233.8,254.3 235.3,252.6" fill="none" stroke="#9a10b0" stroke-width="0.9"/>
<polygon points="234.1,270.7 236.0,272.0 237.5,273.7 237.5,274.9 235.1,277.5 233.1,277.5 230.7,274.9 230.7,273.7 232.2,272.0" fill="none" stroke="#9a10b0" stroke-width="0.9"/>
<polygon points="231.0,290.1 232.9,291.5 234.4,293.2 234.4,294.4 232.0,296.9 230.0,296.9 227.6,294.4 227.6,293.2 229.1,291.5" fill="none" stroke="#9a10b0" stroke-width="0.9"/>
</g></svg></div>

  <svg class="abs" style="left:258px;top:65px" width="16" height="22"><path d="M2.4 2.3 L2.4 18.5 L6 15.2 L9.2 21.4 L11.6 20.3 L8.6 14.2 L13.6 14 Z" fill="#fff" stroke="#000" stroke-width="0.95" stroke-linejoin="miter"/></svg>
  <!-- tooltip -->
  <div class="abs" style="left:275px;top:96px;width:312px;height:82px;background:rgba(0,0,0,0.62);filter:blur(2.6px)"></div>
  <div class="abs" style="left:268px;top:90px;width:314px;height:83px;background:#fff;border:1px solid #a0a0a8"></div>
  <div class="t" style="left:277.5px;top:97px;font-weight:bold;font-size:12px;letter-spacing:-0.15px;color:#1e1e3c">Refresh Solver Model</div>
  <div class="t" style="left:276px;top:116px;color:#1e1e46;line-height:12.9px;letter-spacing:-0.05px">Initially you will see the analysis model created the last time<br>analysis was run.&nbsp; When available, selecting this option allows<br>you to see the model that would be created if analysis were<br>re-run now.</div>
</div>
</body></html>
